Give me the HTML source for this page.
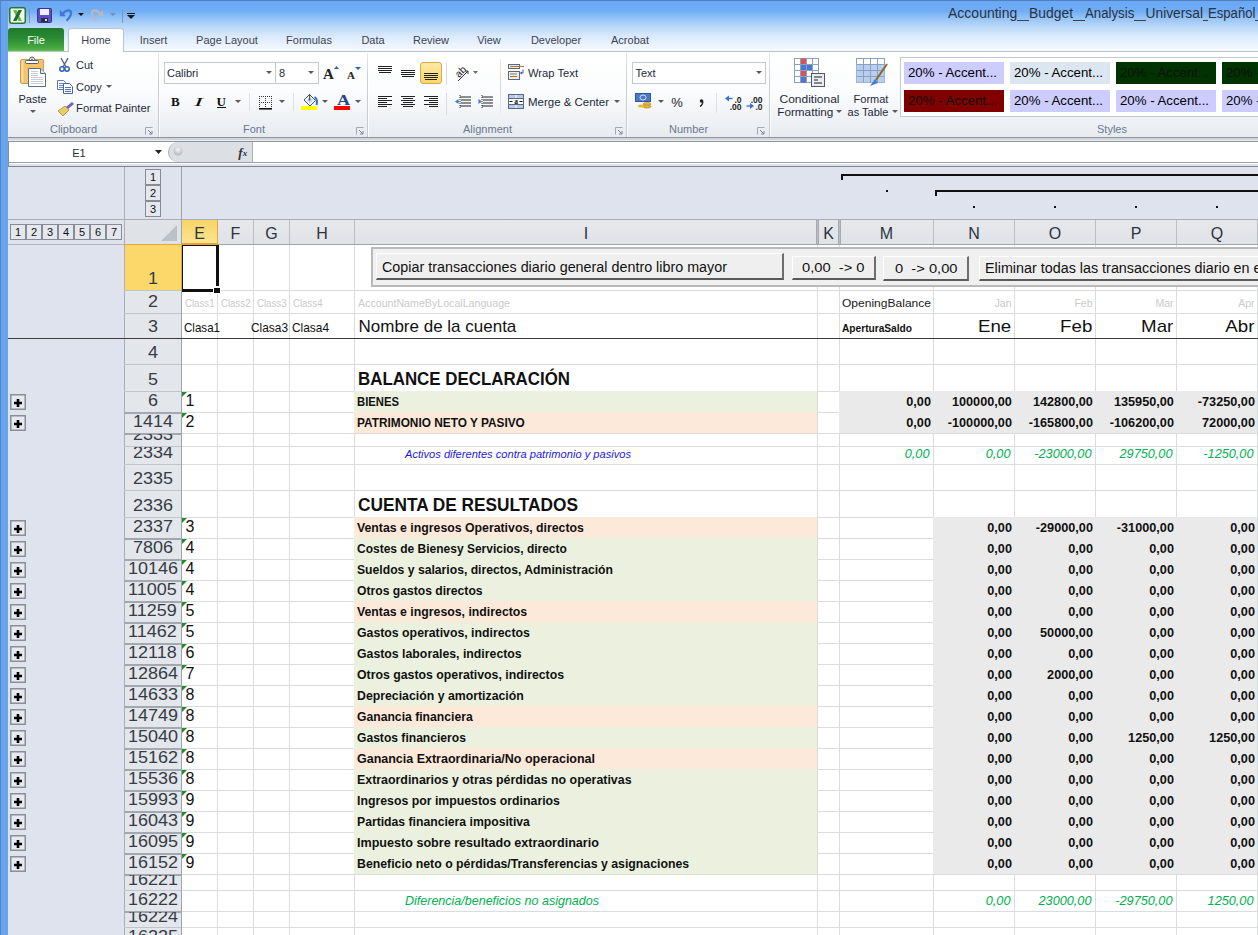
<!DOCTYPE html><html><head><meta charset="utf-8"><style>
html,body{margin:0;padding:0;}
body{width:1258px;height:935px;overflow:hidden;position:relative;background:#fff;font-family:"Liberation Sans",sans-serif;}
.r{position:absolute;}
.t{position:absolute;white-space:pre;}
</style></head><body>
<div class="r" style="left:0px;top:0px;width:1258px;height:51px;background:linear-gradient(to bottom, #4f80c0 0px, #6aa8f4 1px, #70adf5 11px, #98c5f7 19px, #c0dbf9 28px, #dfecfc 38px, #f4f8fe 50px);"></div>
<div class="r" style="left:0px;top:0px;width:8px;height:935px;background:#6aa5ee;"></div>
<div class="r" style="left:0px;top:0px;width:1px;height:935px;background:#4f86cf;"></div>
<div class="r" style="left:0px;top:0px;width:1258px;height:1px;background:#4f80c0;"></div>
<svg class="r" style="left:9px;top:7px" width="17" height="17" viewBox="0 0 17 17"><rect x="0.75" y="0.75" width="15.5" height="15.5" rx="2" fill="#f4fbf2" stroke="#1f7a2e" stroke-width="1.5"/><path d="M4 3 L7.5 3 L13 14 L9.5 14 Z" fill="#5cbf4a"/><path d="M13 3 L9.5 3 L4 14 L7.5 14 Z" fill="#1e6e2a"/></svg>
<div class="r" style="left:29px;top:9px;width:1px;height:14px;background:#7d97b8;"></div>
<svg class="r" style="left:37px;top:8px" width="15" height="15" viewBox="0 0 15 15"><rect x="0.5" y="0.5" width="14" height="14" rx="1" fill="#5a4fc2" stroke="#3b3390"/><rect x="3" y="1" width="9" height="6" fill="#eef0ff"/><rect x="4" y="10" width="7" height="4" fill="#2a2a55"/><rect x="8" y="11" width="2" height="2" fill="#ddd"/></svg>
<svg class="r" style="left:59px;top:8px" width="14" height="14" viewBox="0 0 14 14"><path d="M3.5 6 Q8 0.8 11.5 3.2 Q13.5 7 7.5 12.8" fill="none" stroke="#3f78d8" stroke-width="2.2"/><path d="M0.8 1.8 L0.8 8.2 L7 8.2 Z" fill="#3f78d8"/></svg>
<svg class="r" style="left:78px;top:13px" width="6" height="4" viewBox="0 0 6 4"><path d="M0 0 L6 0 L3 3 Z" fill="#111"/></svg>
<svg class="r" style="left:90px;top:8px" width="14" height="14" viewBox="0 0 14 14"><path d="M10.5 6 Q6 0.8 2.5 3.2 Q0.5 7 6.5 12.8" fill="none" stroke="#b9b9bc" stroke-width="2.2"/><path d="M13.2 1.8 L13.2 8.2 L7 8.2 Z" fill="#b9b9bc"/></svg>
<svg class="r" style="left:110px;top:13px" width="6" height="4" viewBox="0 0 6 4"><path d="M0 0 L6 0 L3 3 Z" fill="#6f8fb8"/></svg>
<div class="r" style="left:122px;top:9px;width:1px;height:14px;background:#7d97b8;"></div>
<svg class="r" style="left:127px;top:13px" width="8" height="7" viewBox="0 0 8 7"><rect x="0" y="0" width="8" height="1" fill="#1a1a1a"/><path d="M0 2 L8 2 L4 6 Z" fill="#1a1a1a"/></svg>
<div class="t" style="left:947.50px;top:7.15px;font-size:13.8px;line-height:13.8px;color:#2a3240;font-family:'Liberation Sans', sans-serif;transform:scaleX(1.0149);transform-origin:0 0;">Accounting</div>
<div class="t" style="left:1029.20px;top:7.15px;font-size:13.8px;line-height:13.8px;color:#2a3240;font-family:'Liberation Sans', sans-serif;transform:scaleX(1.0060);transform-origin:0 0;">Budget</div>
<div class="t" style="left:1084.50px;top:7.15px;font-size:13.8px;line-height:13.8px;color:#2a3240;font-family:'Liberation Sans', sans-serif;transform:scaleX(0.9594);transform-origin:0 0;">Analysis</div>
<div class="t" style="left:1145.50px;top:7.15px;font-size:13.8px;line-height:13.8px;color:#2a3240;font-family:'Liberation Sans', sans-serif;">Universal</div>
<div class="t" style="left:1207.70px;top:7.15px;font-size:13.8px;line-height:13.8px;color:#2a3240;font-family:'Liberation Sans', sans-serif;transform:scaleX(0.9504);transform-origin:0 0;">Español</div>
<div class="r" style="left:1016.5px;top:20px;width:12.5px;height:1px;background:#3a4250;"></div>
<div class="r" style="left:1073px;top:20px;width:11.5px;height:1px;background:#3a4250;"></div>
<div class="r" style="left:1133.5px;top:20px;width:12.0px;height:1px;background:#3a4250;"></div>
<div class="r" style="left:1202.5px;top:20px;width:5.5px;height:1px;background:#3a4250;"></div>
<div class="r" style="left:1255px;top:20px;width:3px;height:1px;background:#3a4250;"></div>
<div class="r" style="left:8px;top:28px;width:56px;height:23px;background:linear-gradient(to bottom, #1f7a2a 0px, #2a8a33 10px, #46a93f 20px, #5cc14a 23px);border-radius:3px 3px 0 0;"></div>
<div class="t" style="left:27.14px;top:34.87px;font-size:11px;line-height:11px;color:#ffffff;font-family:'Liberation Sans', sans-serif;">File</div>
<div class="r" style="left:68px;top:28px;width:56px;height:24px;background:#ffffff;border:1px solid #b6c4d6;border-bottom:none;border-radius:3px 3px 0 0;box-sizing:border-box;"></div>
<div class="t" style="left:81.33px;top:34.87px;font-size:11px;line-height:11px;color:#3c4452;font-family:'Liberation Sans', sans-serif;">Home</div>
<div class="t" style="left:139.74px;top:34.87px;font-size:11px;line-height:11px;color:#3c4452;font-family:'Liberation Sans', sans-serif;">Insert</div>
<div class="t" style="left:196.11px;top:34.87px;font-size:11px;line-height:11px;color:#3c4452;font-family:'Liberation Sans', sans-serif;">Page Layout</div>
<div class="t" style="left:286.08px;top:34.87px;font-size:11px;line-height:11px;color:#3c4452;font-family:'Liberation Sans', sans-serif;">Formulas</div>
<div class="t" style="left:361.38px;top:34.87px;font-size:11px;line-height:11px;color:#3c4452;font-family:'Liberation Sans', sans-serif;">Data</div>
<div class="t" style="left:412.97px;top:34.87px;font-size:11px;line-height:11px;color:#3c4452;font-family:'Liberation Sans', sans-serif;">Review</div>
<div class="t" style="left:477.18px;top:34.87px;font-size:11px;line-height:11px;color:#3c4452;font-family:'Liberation Sans', sans-serif;">View</div>
<div class="t" style="left:530.93px;top:34.87px;font-size:11px;line-height:11px;color:#3c4452;font-family:'Liberation Sans', sans-serif;">Developer</div>
<div class="t" style="left:611.04px;top:34.87px;font-size:11px;line-height:11px;color:#3c4452;font-family:'Liberation Sans', sans-serif;">Acrobat</div>
<div class="r" style="left:8px;top:51px;width:1250px;height:1px;background:#b9c3ce;"></div>
<div class="r" style="left:8px;top:52px;width:1250px;height:85px;background:linear-gradient(to bottom, #ffffff 0px, #fbfcfd 40px, #eef1f5 68px, #e7ebf0 85px);"></div>
<div class="r" style="left:69px;top:51px;width:54px;height:1px;background:#ffffff;"></div>
<div class="r" style="left:8px;top:137px;width:1250px;height:1px;background:#8d949b;"></div>
<div class="r" style="left:8px;top:138px;width:1250px;height:3px;background:#d0d5da;"></div>
<div class="r" style="left:158px;top:53px;width:1px;height:84px;background:linear-gradient(to bottom, #e4e8ec 0%, #c9cfd7 30%, #c3c9d1 100%);"></div>
<div class="r" style="left:159px;top:53px;width:1px;height:84px;background:rgba(255,255,255,0.9);"></div>
<div class="r" style="left:367px;top:53px;width:1px;height:84px;background:linear-gradient(to bottom, #e4e8ec 0%, #c9cfd7 30%, #c3c9d1 100%);"></div>
<div class="r" style="left:368px;top:53px;width:1px;height:84px;background:rgba(255,255,255,0.9);"></div>
<div class="r" style="left:626px;top:53px;width:1px;height:84px;background:linear-gradient(to bottom, #e4e8ec 0%, #c9cfd7 30%, #c3c9d1 100%);"></div>
<div class="r" style="left:627px;top:53px;width:1px;height:84px;background:rgba(255,255,255,0.9);"></div>
<div class="r" style="left:769px;top:53px;width:1px;height:84px;background:linear-gradient(to bottom, #e4e8ec 0%, #c9cfd7 30%, #c3c9d1 100%);"></div>
<div class="r" style="left:770px;top:53px;width:1px;height:84px;background:rgba(255,255,255,0.9);"></div>
<div class="t" style="left:49.96px;top:123.87px;font-size:11px;line-height:11px;color:#6a7890;font-family:'Liberation Sans', sans-serif;">Clipboard</div>
<div class="t" style="left:242.99px;top:123.87px;font-size:11px;line-height:11px;color:#6a7890;font-family:'Liberation Sans', sans-serif;">Font</div>
<div class="t" style="left:463.04px;top:123.87px;font-size:11px;line-height:11px;color:#6a7890;font-family:'Liberation Sans', sans-serif;">Alignment</div>
<div class="t" style="left:668.94px;top:123.87px;font-size:11px;line-height:11px;color:#6a7890;font-family:'Liberation Sans', sans-serif;">Number</div>
<div class="t" style="left:1097.02px;top:123.87px;font-size:11px;line-height:11px;color:#6a7890;font-family:'Liberation Sans', sans-serif;">Styles</div>
<svg class="r" style="left:145px;top:127px" width="8" height="8" viewBox="0 0 8 8"><path d="M0.5 7.5 L0.5 0.5 L7.5 0.5" fill="none" stroke="#a0a8b4"/><path d="M3 3 L7 7 M7 4 L7 7 L4 7" fill="none" stroke="#7a8494"/></svg>
<svg class="r" style="left:356px;top:127px" width="8" height="8" viewBox="0 0 8 8"><path d="M0.5 7.5 L0.5 0.5 L7.5 0.5" fill="none" stroke="#a0a8b4"/><path d="M3 3 L7 7 M7 4 L7 7 L4 7" fill="none" stroke="#7a8494"/></svg>
<svg class="r" style="left:615px;top:127px" width="8" height="8" viewBox="0 0 8 8"><path d="M0.5 7.5 L0.5 0.5 L7.5 0.5" fill="none" stroke="#a0a8b4"/><path d="M3 3 L7 7 M7 4 L7 7 L4 7" fill="none" stroke="#7a8494"/></svg>
<svg class="r" style="left:757px;top:127px" width="8" height="8" viewBox="0 0 8 8"><path d="M0.5 7.5 L0.5 0.5 L7.5 0.5" fill="none" stroke="#a0a8b4"/><path d="M3 3 L7 7 M7 4 L7 7 L4 7" fill="none" stroke="#7a8494"/></svg>
<svg class="r" style="left:19px;top:56px" width="28" height="32" viewBox="0 0 28 32"><rect x="1.5" y="3.5" width="23" height="24" rx="1.5" fill="#f3c46c" stroke="#c59c58"/><rect x="2.5" y="4.5" width="2" height="22" fill="#f9dc9a"/><circle cx="13" cy="3.5" r="2.5" fill="#fff" stroke="#4c5a6a"/><rect x="6.5" y="4.5" width="13" height="3" rx="1" fill="#fff" stroke="#4c5a6a"/><circle cx="13" cy="3.3" r="0.9" fill="#7a5020"/><path d="M9.5 12.5 H21.5 L26.5 17.5 V30.5 H9.5 Z" fill="#fff" stroke="#5a6d85"/><path d="M21.5 12.5 V17.5 H26.5" fill="#dde5f0" stroke="#5a6d85"/><path d="M12 15.5h7M12 17.5h7M12 19.5h7M12 21.5h12M12 23.5h12M12 25.5h12M12 27.5h12" stroke="#c5ccd6"/></svg>
<div class="t" style="left:18.44px;top:93.87px;font-size:11px;line-height:11px;color:#1e2a3a;font-family:'Liberation Sans', sans-serif;">Paste</div>
<svg class="r" style="left:30px;top:110px" width="6" height="4" viewBox="0 0 6 4"><path d="M0 0 L6 0 L3 3 Z" fill="#5a5a5a"/></svg>
<svg class="r" style="left:59px;top:57px" width="11" height="15" viewBox="0 0 11 15"><path d="M2 1 L7 10 M9 1 L4 10" stroke="#5c6472" stroke-width="1.4"/><circle cx="3" cy="12" r="2.2" fill="none" stroke="#2f5fc0" stroke-width="1.5"/><circle cx="8" cy="12" r="2.2" fill="none" stroke="#2f5fc0" stroke-width="1.5"/></svg>
<div class="t" style="left:76.00px;top:59.87px;font-size:11px;line-height:11px;color:#1e2a3a;font-family:'Liberation Sans', sans-serif;">Cut</div>
<svg class="r" style="left:57px;top:79px" width="16" height="15" viewBox="0 0 16 15"><path d="M0.5 1.5h6l2 2v7h-8z" fill="#fff" stroke="#5a7ab8"/><path d="M2 4.5h5M2 6.5h5M2 8.5h5" stroke="#6d8cc8"/><path d="M6.5 4.5h6l3 3v7h-9z" fill="#fff" stroke="#3f63a8"/><path d="M8 8.5h6M8 10.5h6M8 12.5h6" stroke="#4a70c0"/></svg>
<div class="t" style="left:76.00px;top:81.87px;font-size:11px;line-height:11px;color:#1e2a3a;font-family:'Liberation Sans', sans-serif;">Copy</div>
<svg class="r" style="left:106px;top:85px" width="6" height="4" viewBox="0 0 6 4"><path d="M0 0 L6 0 L3 3 Z" fill="#5a5a5a"/></svg>
<svg class="r" style="left:57px;top:101px" width="17" height="16" viewBox="0 0 17 16"><path d="M9 6 L15 1 L17 3 L11 8 Z" fill="#6b5fc8"/><path d="M1 10 L8 5 L12 9 L6 15 Z" fill="#e8cc6a" stroke="#a88a2a" stroke-width="0.8"/></svg>
<div class="t" style="left:76.00px;top:103.37px;font-size:11px;line-height:11px;color:#1e2a3a;font-family:'Liberation Sans', sans-serif;transform:scaleX(1.0241);transform-origin:0 0;">Format Painter</div>
<div class="r" style="left:164px;top:62px;width:112px;height:22px;background:#ffffff;border:1px solid #c3cad3;box-sizing:border-box;"></div>
<div class="r" style="left:275px;top:62px;width:44px;height:22px;background:#ffffff;border:1px solid #c3cad3;box-sizing:border-box;"></div>
<div class="t" style="left:167.00px;top:67.87px;font-size:11px;line-height:11px;color:#1e2a3a;font-family:'Liberation Sans', sans-serif;">Calibri</div>
<div class="t" style="left:279.00px;top:67.87px;font-size:11px;line-height:11px;color:#1e2a3a;font-family:'Liberation Sans', sans-serif;">8</div>
<svg class="r" style="left:266px;top:71px" width="6" height="4" viewBox="0 0 6 4"><path d="M0 0 L6 0 L3 3 Z" fill="#5a5a5a"/></svg>
<svg class="r" style="left:308px;top:71px" width="6" height="4" viewBox="0 0 6 4"><path d="M0 0 L6 0 L3 3 Z" fill="#5a5a5a"/></svg>
<div class="t" style="left:323.00px;top:66.55px;font-size:15px;line-height:15px;color:#222;font-family:'Liberation Serif', serif;font-weight:bold;">A</div>
<svg class="r" style="left:334px;top:66px" width="5" height="3" viewBox="0 0 5 3"><path d="M0 3 L5 3 L2.5 0 Z" fill="#2f5fc0"/></svg>
<div class="t" style="left:347.00px;top:69.87px;font-size:11px;line-height:11px;color:#222;font-family:'Liberation Serif', serif;font-weight:bold;">A</div>
<svg class="r" style="left:355px;top:67px" width="6" height="3" viewBox="0 0 6 3"><path d="M0 0 L6 0 L3 3 Z" fill="#2f5fc0"/></svg>
<div class="t" style="left:171.00px;top:94.71px;font-size:13px;line-height:13px;color:#111;font-family:'Liberation Serif', serif;font-weight:bold;">B</div>
<div class="t" style="left:193.50px;top:94.71px;font-size:13px;line-height:13px;color:#111;font-family:'Liberation Serif', serif;font-style:italic;transform:scaleX(2.0787);transform-origin:0 0;">I</div>
<div class="t" style="left:216.50px;top:94.71px;font-size:13px;line-height:13px;color:#111;font-family:'Liberation Serif', serif;font-weight:bold;">U</div>
<div class="r" style="left:217px;top:107px;width:9px;height:1px;background:#111;"></div>
<svg class="r" style="left:235px;top:100px" width="6" height="4" viewBox="0 0 6 4"><path d="M0 0 L6 0 L3 3 Z" fill="#5a5a5a"/></svg>
<div class="r" style="left:249px;top:93px;width:1px;height:18px;background:#dde1e6;"></div>
<svg class="r" style="left:259px;top:96px" width="14" height="14" viewBox="0 0 14 14"><rect x="0" y="0" width="1" height="1" fill="#333"/><rect x="6" y="0" width="1" height="1" fill="#333"/><rect x="12" y="0" width="1" height="1" fill="#333"/><rect x="0" y="2" width="1" height="1" fill="#333"/><rect x="6" y="2" width="1" height="1" fill="#333"/><rect x="12" y="2" width="1" height="1" fill="#333"/><rect x="0" y="4" width="1" height="1" fill="#333"/><rect x="6" y="4" width="1" height="1" fill="#333"/><rect x="12" y="4" width="1" height="1" fill="#333"/><rect x="0" y="6" width="1" height="1" fill="#333"/><rect x="6" y="6" width="1" height="1" fill="#333"/><rect x="12" y="6" width="1" height="1" fill="#333"/><rect x="0" y="8" width="1" height="1" fill="#333"/><rect x="6" y="8" width="1" height="1" fill="#333"/><rect x="12" y="8" width="1" height="1" fill="#333"/><rect x="0" y="10" width="1" height="1" fill="#333"/><rect x="6" y="10" width="1" height="1" fill="#333"/><rect x="12" y="10" width="1" height="1" fill="#333"/><rect x="2" y="0" width="1" height="1" fill="#333"/><rect x="4" y="0" width="1" height="1" fill="#333"/><rect x="8" y="0" width="1" height="1" fill="#333"/><rect x="10" y="0" width="1" height="1" fill="#333"/><rect x="2" y="6" width="1" height="1" fill="#333"/><rect x="4" y="6" width="1" height="1" fill="#333"/><rect x="8" y="6" width="1" height="1" fill="#333"/><rect x="10" y="6" width="1" height="1" fill="#333"/><rect x="0" y="12" width="13" height="1.6" fill="#111"/></svg>
<svg class="r" style="left:279px;top:100px" width="6" height="4" viewBox="0 0 6 4"><path d="M0 0 L6 0 L3 3 Z" fill="#5a5a5a"/></svg>
<div class="r" style="left:293px;top:93px;width:1px;height:18px;background:#dde1e6;"></div>
<svg class="r" style="left:300px;top:93px" width="19" height="18" viewBox="0 0 19 18"><path d="M4 7 L9.5 1.5 L15.5 7.5 L10 13 Z" fill="#fff" stroke="#2d4f8c" stroke-width="1"/><path d="M6.5 7.5 L10 4 L13.5 7.5 L10 11 Z" fill="#c9d8f0"/><path d="M9.5 1 L9.5 6" stroke="#555" stroke-width="1.2"/><circle cx="9.5" cy="6.5" r="1" fill="#555"/><path d="M14.5 4 Q18 6 16.5 12" stroke="#2f6fd0" stroke-width="2" fill="none"/><rect x="1" y="13" width="16" height="4" fill="#ffff00"/></svg>
<svg class="r" style="left:322px;top:100px" width="6" height="4" viewBox="0 0 6 4"><path d="M0 0 L6 0 L3 3 Z" fill="#5a5a5a"/></svg>
<div class="t" style="left:336.50px;top:92.55px;font-size:15px;line-height:15px;color:#23438c;font-family:'Liberation Serif', serif;font-weight:bold;transform:scaleX(1.2001);transform-origin:0 0;">A</div>
<div class="r" style="left:334px;top:106px;width:16px;height:4px;background:#ff0000;"></div>
<svg class="r" style="left:355px;top:100px" width="6" height="4" viewBox="0 0 6 4"><path d="M0 0 L6 0 L3 3 Z" fill="#5a5a5a"/></svg>
<svg class="r" style="left:378px;top:66px" width="16" height="8" viewBox="0 0 16 8"><rect x="0" y="0" width="14" height="1" fill="#222"/><rect x="0" y="2" width="14" height="1" fill="#222"/><rect x="0" y="4" width="14" height="1" fill="#222"/><rect x="1" y="6" width="12" height="1" fill="#222"/></svg>
<svg class="r" style="left:401px;top:70px" width="16" height="8" viewBox="0 0 16 8"><rect x="0" y="0" width="14" height="1" fill="#222"/><rect x="0" y="2" width="14" height="1" fill="#222"/><rect x="0" y="4" width="14" height="1" fill="#222"/><rect x="1" y="6" width="12" height="1" fill="#222"/></svg>
<div class="r" style="left:420px;top:62px;width:22px;height:22px;background:linear-gradient(to bottom,#fde9a4,#fbd66f);border:1px solid #dca84a;border-radius:3px;box-sizing:border-box;"></div>
<svg class="r" style="left:424px;top:73px" width="16" height="8" viewBox="0 0 16 8"><rect x="0" y="0" width="14" height="1" fill="#222"/><rect x="0" y="2" width="14" height="1" fill="#222"/><rect x="0" y="4" width="14" height="1" fill="#222"/><rect x="1" y="6" width="12" height="1" fill="#222"/></svg>
<div class="r" style="left:446px;top:63px;width:1px;height:22px;background:#d5dae0;"></div>
<svg class="r" style="left:455px;top:65px" width="24" height="17" viewBox="0 0 24 17"><text x="0" y="0" font-size="10" font-family="Liberation Sans" fill="#222" transform="translate(4,13) rotate(-45)">ab</text><path d="M3 16 L13 6" stroke="#333"/><path d="M10 6 L13 6 L13 9" fill="none" stroke="#333"/><path d="M18 6 L23 6 L20.5 9 Z" fill="#6a6a6a"/></svg>
<svg class="r" style="left:378px;top:96px" width="16" height="12" viewBox="0 0 16 12"><rect x="0" y="0" width="14" height="1" fill="#222"/><rect x="0" y="2" width="9" height="1" fill="#222"/><rect x="0" y="4" width="14" height="1" fill="#222"/><rect x="0" y="6" width="9" height="1" fill="#222"/><rect x="0" y="8" width="14" height="1" fill="#222"/><rect x="0" y="10" width="9" height="1" fill="#222"/></svg>
<svg class="r" style="left:401px;top:96px" width="16" height="12" viewBox="0 0 16 12"><rect x="0" y="0" width="14" height="1" fill="#222"/><rect x="2" y="2" width="10" height="1" fill="#222"/><rect x="0" y="4" width="14" height="1" fill="#222"/><rect x="2" y="6" width="10" height="1" fill="#222"/><rect x="0" y="8" width="14" height="1" fill="#222"/><rect x="2" y="10" width="10" height="1" fill="#222"/></svg>
<svg class="r" style="left:424px;top:96px" width="16" height="12" viewBox="0 0 16 12"><rect x="0" y="0" width="14" height="1" fill="#222"/><rect x="5" y="2" width="9" height="1" fill="#222"/><rect x="0" y="4" width="14" height="1" fill="#222"/><rect x="5" y="6" width="9" height="1" fill="#222"/><rect x="0" y="8" width="14" height="1" fill="#222"/><rect x="5" y="10" width="9" height="1" fill="#222"/></svg>
<div class="r" style="left:446px;top:93px;width:1px;height:22px;background:#d5dae0;"></div>
<svg class="r" style="left:455px;top:94px" width="17" height="15" viewBox="0 0 17 15"><path d="M5 3h11M6 6h10M6 9h10M5 12h11" stroke="#222" stroke-width="1.2"/><path d="M5 1v14" stroke="#222" stroke-dasharray="1 1"/><path d="M0 7.5 L3.5 5 L3.5 10 Z" fill="#3a7ae0"/><path d="M3 7.5h2" stroke="#3a7ae0"/></svg>
<svg class="r" style="left:477px;top:94px" width="17" height="15" viewBox="0 0 17 15"><path d="M5 3h11M6 6h10M6 9h10M5 12h11" stroke="#222" stroke-width="1.2"/><path d="M5 1v14" stroke="#222" stroke-dasharray="1 1"/><path d="M5 7.5 L1.5 5 L1.5 10 Z" fill="#3a7ae0"/></svg>
<div class="r" style="left:500px;top:59px;width:1px;height:55px;background:linear-gradient(to bottom,#e8ecf1,#cfd5dd 50%,#e8ecf1);"></div>
<svg class="r" style="left:508px;top:64px" width="17" height="17" viewBox="0 0 17 17"><rect x="0.5" y="0.5" width="11" height="4" fill="#e8eef6" stroke="#56697f"/><path d="M2 2.5h14" stroke="#b8732a" stroke-width="1.1"/><rect x="0.5" y="7.5" width="11" height="8" fill="#e8eef6" stroke="#56697f"/><path d="M2 10h7M2 12.5h7" stroke="#b8732a" stroke-width="1.1"/><path d="M15 5.5 V9 L12.5 9" fill="none" stroke="#3a62b0"/><path d="M12 9 L14 7.5 L14 10.5 Z" fill="#3a62b0"/></svg>
<div class="t" style="left:527.50px;top:68.37px;font-size:11px;line-height:11px;color:#1e2a3a;font-family:'Liberation Sans', sans-serif;transform:scaleX(1.0180);transform-origin:0 0;">Wrap Text</div>
<svg class="r" style="left:508px;top:94px" width="16" height="15" viewBox="0 0 16 15"><rect x="0.5" y="0.5" width="15" height="14" fill="#fff" stroke="#56697f"/><rect x="1" y="1" width="14" height="3" fill="#b7cbe8"/><rect x="1" y="11" width="14" height="3" fill="#b7cbe8"/><path d="M8 1v3M8 11v3" stroke="#fff"/><path d="M0.5 4.5h15M0.5 10.5h15" stroke="#56697f"/><text x="8" y="10" font-size="7.5" font-weight="bold" text-anchor="middle" font-family="Liberation Serif" fill="#111">a</text><path d="M1.5 7.5h3M11.5 7.5h3" stroke="#111"/></svg>
<div class="t" style="left:527.50px;top:97.37px;font-size:11px;line-height:11px;color:#1e2a3a;font-family:'Liberation Sans', sans-serif;transform:scaleX(1.0432);transform-origin:0 0;">Merge &amp; Center</div>
<svg class="r" style="left:614px;top:100px" width="6" height="4" viewBox="0 0 6 4"><path d="M0 0 L6 0 L3 3 Z" fill="#5a5a5a"/></svg>
<div class="r" style="left:632px;top:62px;width:134px;height:22px;background:#ffffff;border:1px solid #c3cad3;box-sizing:border-box;"></div>
<div class="t" style="left:635.50px;top:67.87px;font-size:11px;line-height:11px;color:#1e2a3a;font-family:'Liberation Sans', sans-serif;">Text</div>
<svg class="r" style="left:756px;top:71px" width="6" height="4" viewBox="0 0 6 4"><path d="M0 0 L6 0 L3 3 Z" fill="#5a5a5a"/></svg>
<svg class="r" style="left:635px;top:93px" width="18" height="16" viewBox="0 0 18 16"><rect x="0.5" y="0.5" width="15" height="8" fill="#4a78c8" stroke="#2f5aa0"/><ellipse cx="8" cy="4.5" rx="3" ry="2.5" fill="none" stroke="#dde"/><ellipse cx="12" cy="11" rx="4" ry="1.6" fill="#e6b53a" stroke="#a8801e" stroke-width="0.6"/><ellipse cx="12" cy="13.5" rx="4" ry="1.6" fill="#e6b53a" stroke="#a8801e" stroke-width="0.6"/><ellipse cx="6" cy="13" rx="3" ry="1.5" fill="#e6b53a"/></svg>
<svg class="r" style="left:658px;top:100px" width="6" height="4" viewBox="0 0 6 4"><path d="M0 0 L6 0 L3 3 Z" fill="#5a5a5a"/></svg>
<div class="t" style="left:671.22px;top:96.21px;font-size:13px;line-height:13px;color:#222;font-family:'Liberation Sans', sans-serif;">%</div>
<svg class="r" style="left:698px;top:98px" width="7" height="10" viewBox="0 0 7 10"><circle cx="3.5" cy="3" r="1.8" fill="#222"/><path d="M4.8 3.5 Q5 6.5 2 8.5" stroke="#222" stroke-width="1.3" fill="none"/></svg>
<div class="r" style="left:716px;top:93px;width:1px;height:20px;background:#dde1e6;"></div>
<svg class="r" style="left:724px;top:94px" width="40" height="17" viewBox="0 0 40 17"><g font-family="Liberation Sans" font-size="8.5" font-weight="bold" fill="#222"><text x="17.5" y="8.5" text-anchor="end">.0</text><text x="17.5" y="15.5" text-anchor="end">.00</text><text x="38.5" y="8.5" text-anchor="end">.00</text><text x="38.5" y="15.5" text-anchor="end">.0</text></g><path d="M1 4.5 L5 1.5 L5 7.5 Z" fill="#3a6fd8"/><path d="M4 4.5h4.5" stroke="#3a6fd8" stroke-width="1.4"/><path d="M30 12 L26 9 L26 15 Z" fill="#3a6fd8"/><path d="M22.5 12h4" stroke="#3a6fd8" stroke-width="1.4"/></svg>
<svg class="r" style="left:794px;top:58px" width="32" height="30" viewBox="0 0 32 30"><g stroke="#8aa0c0" fill="#fff"><rect x="0.5" y="0.5" width="24" height="24"/></g><rect x="6.5" y="0.5" width="6" height="24" fill="#e05050"/><rect x="6.5" y="6.5" width="12" height="6" fill="#4a78d0"/><rect x="6.5" y="18.5" width="6" height="6" fill="#4a78d0"/><path d="M0.5 6.5h24M0.5 12.5h24M0.5 18.5h24M6.5 0.5v24M12.5 0.5v24M18.5 0.5v24" stroke="#8aa0c0"/><rect x="17.5" y="15.5" width="13" height="13" fill="#e8ecf2" stroke="#556"/><path d="M20 19h8M20 22h4M20 25h8" stroke="#222"/></svg>
<div class="t" style="left:781.98px;top:93.87px;font-size:11px;line-height:11px;color:#1e2a3a;font-family:'Liberation Sans', sans-serif;transform:scaleX(1.0901);transform-origin:50% 0;">Conditional</div>
<div class="t" style="left:779.21px;top:106.87px;font-size:11px;line-height:11px;color:#1e2a3a;font-family:'Liberation Sans', sans-serif;transform:scaleX(1.0652);transform-origin:50% 0;">Formatting</div>
<svg class="r" style="left:836px;top:110px" width="6" height="4" viewBox="0 0 6 4"><path d="M0 0 L6 0 L3 3 Z" fill="#5a5a5a"/></svg>
<svg class="r" style="left:856px;top:58px" width="32" height="30" viewBox="0 0 32 30"><rect x="0.5" y="0.5" width="28" height="24" fill="#fff" stroke="#8aa0c0"/><rect x="0.5" y="6.5" width="28" height="18" fill="#b8cdf0"/><path d="M0.5 6.5h28M0.5 12.5h28M0.5 18.5h28M7.5 0.5v24M14.5 0.5v24M21.5 0.5v24" stroke="#8aa0c0"/><path d="M31 6 L20 22" stroke="#8a6a30" stroke-width="2"/><path d="M19 21 L14 28 L22 25 Z" fill="#4a7ad0"/></svg>
<div class="t" style="left:853.58px;top:93.87px;font-size:11px;line-height:11px;color:#1e2a3a;font-family:'Liberation Sans', sans-serif;">Format</div>
<div class="t" style="left:847.61px;top:106.87px;font-size:11px;line-height:11px;color:#1e2a3a;font-family:'Liberation Sans', sans-serif;">as Table</div>
<svg class="r" style="left:892px;top:110px" width="6" height="4" viewBox="0 0 6 4"><path d="M0 0 L6 0 L3 3 Z" fill="#5a5a5a"/></svg>
<div class="r" style="left:900px;top:57px;width:360px;height:60px;background:#ffffff;border:1px solid #c3cad3;box-sizing:border-box;"></div>
<div class="r" style="left:904px;top:62px;width:100px;height:22px;background:#ccccff;"></div>
<div class="t" style="left:908.00px;top:66.62px;font-size:12.5px;line-height:12.5px;color:#000;font-family:'Liberation Sans', sans-serif;transform:scaleX(1.0586);transform-origin:0 0;">20% - Accent...</div>
<div class="r" style="left:1010px;top:62px;width:100px;height:22px;background:#dce6f1;"></div>
<div class="t" style="left:1014.00px;top:66.62px;font-size:12.5px;line-height:12.5px;color:#000;font-family:'Liberation Sans', sans-serif;transform:scaleX(1.0586);transform-origin:0 0;">20% - Accent...</div>
<div class="r" style="left:1116px;top:62px;width:100px;height:22px;background:#003300;"></div>
<div class="t" style="left:1120.00px;top:66.62px;font-size:12.5px;line-height:12.5px;color:#111;font-family:'Liberation Sans', sans-serif;transform:scaleX(1.0586);transform-origin:0 0;">20% - Accent...</div>
<div class="r" style="left:1222px;top:62px;width:100px;height:22px;background:#003300;"></div>
<div class="t" style="left:1226.00px;top:66.62px;font-size:12.5px;line-height:12.5px;color:#111;font-family:'Liberation Sans', sans-serif;transform:scaleX(1.0586);transform-origin:0 0;">20% - Accent...</div>
<div class="r" style="left:904px;top:90px;width:100px;height:22px;background:#800000;"></div>
<div class="t" style="left:908.00px;top:94.62px;font-size:12.5px;line-height:12.5px;color:#111;font-family:'Liberation Sans', sans-serif;transform:scaleX(1.0586);transform-origin:0 0;">20% - Accent...</div>
<div class="r" style="left:1010px;top:90px;width:100px;height:22px;background:#ccccff;"></div>
<div class="t" style="left:1014.00px;top:94.62px;font-size:12.5px;line-height:12.5px;color:#000;font-family:'Liberation Sans', sans-serif;transform:scaleX(1.0586);transform-origin:0 0;">20% - Accent...</div>
<div class="r" style="left:1116px;top:90px;width:100px;height:22px;background:#ccccff;"></div>
<div class="t" style="left:1120.00px;top:94.62px;font-size:12.5px;line-height:12.5px;color:#000;font-family:'Liberation Sans', sans-serif;transform:scaleX(1.0586);transform-origin:0 0;">20% - Accent...</div>
<div class="r" style="left:1222px;top:90px;width:100px;height:22px;background:#ccccff;"></div>
<div class="t" style="left:1226.00px;top:94.62px;font-size:12.5px;line-height:12.5px;color:#000;font-family:'Liberation Sans', sans-serif;transform:scaleX(1.0586);transform-origin:0 0;">20% - Accent...</div>
<div class="r" style="left:8px;top:140px;width:1250px;height:26px;background:#e9ecf0;"></div>
<div class="r" style="left:8px;top:141px;width:1250px;height:1px;background:#90969c;"></div>
<div class="r" style="left:8px;top:142px;width:1250px;height:20px;background:#ffffff;"></div>
<div class="r" style="left:8px;top:162px;width:1250px;height:1px;background:#9aa0a6;"></div>
<div class="r" style="left:8px;top:163px;width:1250px;height:1px;background:#ffffff;"></div>
<div class="r" style="left:9px;top:164px;width:1249px;height:2px;background:#dfe3ee;"></div>
<div class="r" style="left:8px;top:141px;width:1px;height:25px;background:#8a9096;"></div>
<div class="t" style="left:72.27px;top:147.87px;font-size:11px;line-height:11px;color:#1e2a3a;font-family:'Liberation Sans', sans-serif;">E1</div>
<svg class="r" style="left:155px;top:150px" width="7" height="4" viewBox="0 0 7 4"><path d="M0 0 L7 0 L3.5 4 Z" fill="#222"/></svg>
<div class="r" style="left:168px;top:142px;width:85px;height:20px;background:#dcdfe4;border-radius:10px 0 0 10px;border-left:1px solid #a9aeb4;box-sizing:border-box;"></div>
<div class="r" style="left:252px;top:142px;width:1px;height:20px;background:#a9aeb4;"></div>
<svg class="r" style="left:173px;top:146px" width="10" height="10" viewBox="0 0 10 10"><defs><radialGradient id="gb" cx="0.5" cy="0.35" r="0.6"><stop offset="0" stop-color="#f4f5f7"/><stop offset="1" stop-color="#b7bbc1"/></radialGradient></defs><circle cx="5" cy="5" r="4.5" fill="url(#gb)"/></svg>
<div class="t" style="left:238.34px;top:145.71px;font-size:13px;line-height:13px;color:#333;font-family:'Liberation Serif', serif;font-weight:bold;font-style:italic;">f</div>
<div class="t" style="left:242.75px;top:149.03px;font-size:9px;line-height:9px;color:#333;font-family:'Liberation Serif', serif;font-weight:bold;font-style:italic;">x</div>
<div class="r" style="left:8px;top:166px;width:1250px;height:1px;background:#80858a;"></div>
<div class="r" style="left:8px;top:167px;width:1250px;height:53px;background:#dfe3ee;"></div>
<div class="r" style="left:8px;top:220px;width:116px;height:715px;background:#dfe3ee;"></div>
<div class="r" style="left:124px;top:167px;width:1px;height:768px;background:#a9aeb5;"></div>
<div class="r" style="left:181px;top:167px;width:1px;height:53px;background:#c4cad6;"></div>
<div class="r" style="left:8px;top:219px;width:1250px;height:1px;background:#a9aeb5;"></div>
<div class="r" style="left:8px;top:244px;width:116px;height:1px;background:#b0b5bc;"></div>
<div class="r" style="left:145px;top:169px;width:16px;height:16px;background:#e4e7ed;border:1px solid #878c94;box-sizing:border-box;"></div>
<div class="t" style="left:149.94px;top:172.37px;font-size:11px;line-height:11px;color:#111;font-family:'Liberation Sans', sans-serif;">1</div>
<div class="r" style="left:145px;top:185px;width:16px;height:16px;background:#e4e7ed;border:1px solid #878c94;box-sizing:border-box;"></div>
<div class="t" style="left:149.94px;top:188.37px;font-size:11px;line-height:11px;color:#111;font-family:'Liberation Sans', sans-serif;">2</div>
<div class="r" style="left:145px;top:201px;width:16px;height:16px;background:#e4e7ed;border:1px solid #878c94;box-sizing:border-box;"></div>
<div class="t" style="left:149.94px;top:204.37px;font-size:11px;line-height:11px;color:#111;font-family:'Liberation Sans', sans-serif;">3</div>
<div class="r" style="left:10px;top:224px;width:16px;height:16px;background:#e4e7ed;border:1px solid #878c94;box-sizing:border-box;"></div>
<div class="t" style="left:14.94px;top:227.37px;font-size:11px;line-height:11px;color:#111;font-family:'Liberation Sans', sans-serif;">1</div>
<div class="r" style="left:26px;top:224px;width:16px;height:16px;background:#e4e7ed;border:1px solid #878c94;box-sizing:border-box;"></div>
<div class="t" style="left:30.94px;top:227.37px;font-size:11px;line-height:11px;color:#111;font-family:'Liberation Sans', sans-serif;">2</div>
<div class="r" style="left:42px;top:224px;width:16px;height:16px;background:#e4e7ed;border:1px solid #878c94;box-sizing:border-box;"></div>
<div class="t" style="left:46.94px;top:227.37px;font-size:11px;line-height:11px;color:#111;font-family:'Liberation Sans', sans-serif;">3</div>
<div class="r" style="left:58px;top:224px;width:16px;height:16px;background:#e4e7ed;border:1px solid #878c94;box-sizing:border-box;"></div>
<div class="t" style="left:62.94px;top:227.37px;font-size:11px;line-height:11px;color:#111;font-family:'Liberation Sans', sans-serif;">4</div>
<div class="r" style="left:74px;top:224px;width:16px;height:16px;background:#e4e7ed;border:1px solid #878c94;box-sizing:border-box;"></div>
<div class="t" style="left:78.94px;top:227.37px;font-size:11px;line-height:11px;color:#111;font-family:'Liberation Sans', sans-serif;">5</div>
<div class="r" style="left:90px;top:224px;width:16px;height:16px;background:#e4e7ed;border:1px solid #878c94;box-sizing:border-box;"></div>
<div class="t" style="left:94.94px;top:227.37px;font-size:11px;line-height:11px;color:#111;font-family:'Liberation Sans', sans-serif;">6</div>
<div class="r" style="left:106px;top:224px;width:16px;height:16px;background:#e4e7ed;border:1px solid #878c94;box-sizing:border-box;"></div>
<div class="t" style="left:110.94px;top:227.37px;font-size:11px;line-height:11px;color:#111;font-family:'Liberation Sans', sans-serif;">7</div>
<div class="r" style="left:182px;top:245px;width:1076px;height:690px;background:#ffffff;"></div>
<div class="r" style="left:182px;top:220px;width:1076px;height:24px;background:linear-gradient(to bottom,#e6e8ec,#dfe2e6);"></div>
<div class="r" style="left:125px;top:220px;width:56px;height:24px;background:#dfe2e6;"></div>
<svg class="r" style="left:160px;top:224px" width="18" height="18" viewBox="0 0 18 18"><path d="M17 1 L17 17 L1 17 Z" fill="#bcc1c8"/></svg>
<div class="r" style="left:124px;top:244px;width:1134px;height:1px;background:#9ea4ac;"></div>
<div class="r" style="left:217px;top:220px;width:1px;height:24px;background:#b9bec6;"></div>
<div class="r" style="left:253px;top:220px;width:1px;height:24px;background:#b9bec6;"></div>
<div class="r" style="left:289px;top:220px;width:1px;height:24px;background:#b9bec6;"></div>
<div class="r" style="left:354px;top:220px;width:1px;height:24px;background:#b9bec6;"></div>
<div class="r" style="left:817px;top:220px;width:1px;height:24px;background:#b9bec6;"></div>
<div class="r" style="left:839px;top:220px;width:1px;height:24px;background:#b9bec6;"></div>
<div class="r" style="left:933px;top:220px;width:1px;height:24px;background:#b9bec6;"></div>
<div class="r" style="left:1014px;top:220px;width:1px;height:24px;background:#b9bec6;"></div>
<div class="r" style="left:1095px;top:220px;width:1px;height:24px;background:#b9bec6;"></div>
<div class="r" style="left:1176px;top:220px;width:1px;height:24px;background:#b9bec6;"></div>
<div class="r" style="left:1257px;top:220px;width:1px;height:24px;background:#b9bec6;"></div>
<div class="r" style="left:816px;top:220px;width:1px;height:24px;background:#a5aab2;"></div>
<div class="r" style="left:818px;top:220px;width:1px;height:24px;background:#a5aab2;"></div>
<div class="r" style="left:838px;top:220px;width:1px;height:24px;background:#a5aab2;"></div>
<div class="r" style="left:840px;top:220px;width:1px;height:24px;background:#a5aab2;"></div>
<div class="r" style="left:182px;top:220px;width:35px;height:24px;background:linear-gradient(to bottom,#f8d46a,#fde58f);"></div>
<div class="r" style="left:181px;top:220px;width:1px;height:25px;background:#e1a93a;"></div>
<div class="r" style="left:217px;top:220px;width:1px;height:25px;background:#e1a93a;"></div>
<div class="r" style="left:182px;top:243px;width:35px;height:2px;background:#e8a030;"></div>
<div class="t" style="left:194.16px;top:225.72px;font-size:16px;line-height:16px;color:#2c3440;font-family:'Liberation Sans', sans-serif;">E</div>
<div class="t" style="left:230.61px;top:225.72px;font-size:16px;line-height:16px;color:#2c3440;font-family:'Liberation Sans', sans-serif;">F</div>
<div class="t" style="left:265.28px;top:225.72px;font-size:16px;line-height:16px;color:#2c3440;font-family:'Liberation Sans', sans-serif;">G</div>
<div class="t" style="left:316.22px;top:225.72px;font-size:16px;line-height:16px;color:#2c3440;font-family:'Liberation Sans', sans-serif;">H</div>
<div class="t" style="left:583.78px;top:225.72px;font-size:16px;line-height:16px;color:#2c3440;font-family:'Liberation Sans', sans-serif;">I</div>
<div class="t" style="left:823.16px;top:225.72px;font-size:16px;line-height:16px;color:#2c3440;font-family:'Liberation Sans', sans-serif;">K</div>
<div class="t" style="left:879.84px;top:225.72px;font-size:16px;line-height:16px;color:#2c3440;font-family:'Liberation Sans', sans-serif;">M</div>
<div class="t" style="left:968.22px;top:225.72px;font-size:16px;line-height:16px;color:#2c3440;font-family:'Liberation Sans', sans-serif;">N</div>
<div class="t" style="left:1048.78px;top:225.72px;font-size:16px;line-height:16px;color:#2c3440;font-family:'Liberation Sans', sans-serif;">O</div>
<div class="t" style="left:1130.66px;top:225.72px;font-size:16px;line-height:16px;color:#2c3440;font-family:'Liberation Sans', sans-serif;">P</div>
<div class="t" style="left:1210.78px;top:225.72px;font-size:16px;line-height:16px;color:#2c3440;font-family:'Liberation Sans', sans-serif;">Q</div>
<div class="r" style="left:125px;top:245px;width:56px;height:46px;background:#e3e6ea;"></div>
<div class="r" style="left:125px;top:291px;width:56px;height:23px;background:#e3e6ea;"></div>
<div class="r" style="left:125px;top:314px;width:56px;height:25px;background:#e3e6ea;"></div>
<div class="r" style="left:125px;top:339px;width:56px;height:26px;background:#e3e6ea;"></div>
<div class="r" style="left:125px;top:365px;width:56px;height:27px;background:#e3e6ea;"></div>
<div class="r" style="left:125px;top:392px;width:56px;height:21px;background:#e3e6ea;"></div>
<div class="r" style="left:125px;top:413px;width:56px;height:21px;background:#e3e6ea;"></div>
<div class="r" style="left:125px;top:434px;width:56px;height:13px;background:#e3e6ea;"></div>
<div class="r" style="left:125px;top:447px;width:56px;height:18px;background:#e3e6ea;"></div>
<div class="r" style="left:125px;top:465px;width:56px;height:26px;background:#e3e6ea;"></div>
<div class="r" style="left:125px;top:491px;width:56px;height:27px;background:#e3e6ea;"></div>
<div class="r" style="left:125px;top:518px;width:56px;height:21px;background:#e3e6ea;"></div>
<div class="r" style="left:125px;top:539px;width:56px;height:21px;background:#e3e6ea;"></div>
<div class="r" style="left:125px;top:560px;width:56px;height:21px;background:#e3e6ea;"></div>
<div class="r" style="left:125px;top:581px;width:56px;height:21px;background:#e3e6ea;"></div>
<div class="r" style="left:125px;top:602px;width:56px;height:21px;background:#e3e6ea;"></div>
<div class="r" style="left:125px;top:623px;width:56px;height:21px;background:#e3e6ea;"></div>
<div class="r" style="left:125px;top:644px;width:56px;height:21px;background:#e3e6ea;"></div>
<div class="r" style="left:125px;top:665px;width:56px;height:21px;background:#e3e6ea;"></div>
<div class="r" style="left:125px;top:686px;width:56px;height:21px;background:#e3e6ea;"></div>
<div class="r" style="left:125px;top:707px;width:56px;height:21px;background:#e3e6ea;"></div>
<div class="r" style="left:125px;top:728px;width:56px;height:21px;background:#e3e6ea;"></div>
<div class="r" style="left:125px;top:749px;width:56px;height:21px;background:#e3e6ea;"></div>
<div class="r" style="left:125px;top:770px;width:56px;height:21px;background:#e3e6ea;"></div>
<div class="r" style="left:125px;top:791px;width:56px;height:21px;background:#e3e6ea;"></div>
<div class="r" style="left:125px;top:812px;width:56px;height:21px;background:#e3e6ea;"></div>
<div class="r" style="left:125px;top:833px;width:56px;height:21px;background:#e3e6ea;"></div>
<div class="r" style="left:125px;top:854px;width:56px;height:21px;background:#e3e6ea;"></div>
<div class="r" style="left:125px;top:875px;width:56px;height:16px;background:#e3e6ea;"></div>
<div class="r" style="left:125px;top:891px;width:56px;height:21px;background:#e3e6ea;"></div>
<div class="r" style="left:125px;top:912px;width:56px;height:16px;background:#e3e6ea;"></div>
<div class="r" style="left:125px;top:928px;width:56px;height:21px;background:#e3e6ea;"></div>
<div class="r" style="left:125px;top:245px;width:56px;height:45px;background:#fcd86b;"></div>
<div class="r" style="left:124px;top:244px;width:58px;height:1px;background:#e1a93a;"></div>
<div class="r" style="left:124px;top:290px;width:58px;height:1px;background:#e1a93a;"></div>
<div class="r" style="left:181px;top:167px;width:1px;height:768px;background:#9ea4ac;"></div>
<div class="r" style="left:124px;top:290px;width:57px;height:1px;background:#c1c5cc;"></div>
<div class="r" style="left:124px;top:313px;width:57px;height:1px;background:#c1c5cc;"></div>
<div class="r" style="left:124px;top:338px;width:57px;height:1px;background:#c1c5cc;"></div>
<div class="r" style="left:124px;top:364px;width:57px;height:1px;background:#c1c5cc;"></div>
<div class="r" style="left:124px;top:391px;width:57px;height:1px;background:#c1c5cc;"></div>
<div class="r" style="left:124px;top:412px;width:57px;height:2px;background:#a3a8b0;"></div>
<div class="r" style="left:124px;top:433px;width:57px;height:2px;background:#a3a8b0;"></div>
<div class="r" style="left:124px;top:446px;width:57px;height:1px;background:#c1c5cc;"></div>
<div class="r" style="left:124px;top:464px;width:57px;height:1px;background:#c1c5cc;"></div>
<div class="r" style="left:124px;top:490px;width:57px;height:1px;background:#c1c5cc;"></div>
<div class="r" style="left:124px;top:517px;width:57px;height:1px;background:#c1c5cc;"></div>
<div class="r" style="left:124px;top:538px;width:57px;height:2px;background:#a3a8b0;"></div>
<div class="r" style="left:124px;top:559px;width:57px;height:2px;background:#a3a8b0;"></div>
<div class="r" style="left:124px;top:580px;width:57px;height:2px;background:#a3a8b0;"></div>
<div class="r" style="left:124px;top:601px;width:57px;height:2px;background:#a3a8b0;"></div>
<div class="r" style="left:124px;top:622px;width:57px;height:2px;background:#a3a8b0;"></div>
<div class="r" style="left:124px;top:643px;width:57px;height:2px;background:#a3a8b0;"></div>
<div class="r" style="left:124px;top:664px;width:57px;height:2px;background:#a3a8b0;"></div>
<div class="r" style="left:124px;top:685px;width:57px;height:2px;background:#a3a8b0;"></div>
<div class="r" style="left:124px;top:706px;width:57px;height:2px;background:#a3a8b0;"></div>
<div class="r" style="left:124px;top:727px;width:57px;height:2px;background:#a3a8b0;"></div>
<div class="r" style="left:124px;top:748px;width:57px;height:2px;background:#a3a8b0;"></div>
<div class="r" style="left:124px;top:769px;width:57px;height:2px;background:#a3a8b0;"></div>
<div class="r" style="left:124px;top:790px;width:57px;height:2px;background:#a3a8b0;"></div>
<div class="r" style="left:124px;top:811px;width:57px;height:2px;background:#a3a8b0;"></div>
<div class="r" style="left:124px;top:832px;width:57px;height:2px;background:#a3a8b0;"></div>
<div class="r" style="left:124px;top:853px;width:57px;height:2px;background:#a3a8b0;"></div>
<div class="r" style="left:124px;top:874px;width:57px;height:2px;background:#a3a8b0;"></div>
<div class="r" style="left:124px;top:890px;width:57px;height:1px;background:#c1c5cc;"></div>
<div class="r" style="left:124px;top:911px;width:57px;height:2px;background:#a3a8b0;"></div>
<div class="r" style="left:124px;top:927px;width:57px;height:1px;background:#c1c5cc;"></div>
<div class="r" style="left:124px;top:948px;width:57px;height:1px;background:#c1c5cc;"></div>
<div class="r" style="left:124px;top:245px;width:57px;height:46px;overflow:hidden">
<div class="t" style="left:23.80px;top:24.80px;font-size:16.5px;line-height:16.5px;color:#363c46;transform:scaleX(1.09);transform-origin:0 0">1</div>
</div>
<div class="r" style="left:124px;top:291px;width:57px;height:23px;overflow:hidden">
<div class="t" style="left:23.80px;top:1.81px;font-size:16.5px;line-height:16.5px;color:#363c46;transform:scaleX(1.09);transform-origin:0 0">2</div>
</div>
<div class="r" style="left:124px;top:314px;width:57px;height:25px;overflow:hidden">
<div class="t" style="left:23.80px;top:3.81px;font-size:16.5px;line-height:16.5px;color:#363c46;transform:scaleX(1.09);transform-origin:0 0">3</div>
</div>
<div class="r" style="left:124px;top:339px;width:57px;height:26px;overflow:hidden">
<div class="t" style="left:23.80px;top:4.81px;font-size:16.5px;line-height:16.5px;color:#363c46;transform:scaleX(1.09);transform-origin:0 0">4</div>
</div>
<div class="r" style="left:124px;top:365px;width:57px;height:27px;overflow:hidden">
<div class="t" style="left:23.80px;top:5.81px;font-size:16.5px;line-height:16.5px;color:#363c46;transform:scaleX(1.09);transform-origin:0 0">5</div>
</div>
<div class="r" style="left:124px;top:392px;width:57px;height:20px;overflow:hidden">
<div class="t" style="left:23.80px;top:-0.19px;font-size:16.5px;line-height:16.5px;color:#363c46;transform:scaleX(1.09);transform-origin:0 0">6</div>
</div>
<div class="r" style="left:124px;top:413px;width:57px;height:20px;overflow:hidden">
<div class="t" style="left:8.79px;top:-0.19px;font-size:16.5px;line-height:16.5px;color:#363c46;transform:scaleX(1.09);transform-origin:0 0">1414</div>
</div>
<div class="r" style="left:124px;top:434px;width:57px;height:13px;overflow:hidden">
<div class="t" style="left:8.79px;top:-8.19px;font-size:16.5px;line-height:16.5px;color:#363c46;transform:scaleX(1.09);transform-origin:0 0">2333</div>
</div>
<div class="r" style="left:124px;top:447px;width:57px;height:18px;overflow:hidden">
<div class="t" style="left:8.79px;top:-3.19px;font-size:16.5px;line-height:16.5px;color:#363c46;transform:scaleX(1.09);transform-origin:0 0">2334</div>
</div>
<div class="r" style="left:124px;top:465px;width:57px;height:26px;overflow:hidden">
<div class="t" style="left:8.79px;top:4.81px;font-size:16.5px;line-height:16.5px;color:#363c46;transform:scaleX(1.09);transform-origin:0 0">2335</div>
</div>
<div class="r" style="left:124px;top:491px;width:57px;height:27px;overflow:hidden">
<div class="t" style="left:8.79px;top:5.81px;font-size:16.5px;line-height:16.5px;color:#363c46;transform:scaleX(1.09);transform-origin:0 0">2336</div>
</div>
<div class="r" style="left:124px;top:518px;width:57px;height:20px;overflow:hidden">
<div class="t" style="left:8.79px;top:-0.19px;font-size:16.5px;line-height:16.5px;color:#363c46;transform:scaleX(1.09);transform-origin:0 0">2337</div>
</div>
<div class="r" style="left:124px;top:539px;width:57px;height:20px;overflow:hidden">
<div class="t" style="left:8.79px;top:-0.19px;font-size:16.5px;line-height:16.5px;color:#363c46;transform:scaleX(1.09);transform-origin:0 0">7806</div>
</div>
<div class="r" style="left:124px;top:560px;width:57px;height:20px;overflow:hidden">
<div class="t" style="left:3.79px;top:-0.19px;font-size:16.5px;line-height:16.5px;color:#363c46;transform:scaleX(1.09);transform-origin:0 0">10146</div>
</div>
<div class="r" style="left:124px;top:581px;width:57px;height:20px;overflow:hidden">
<div class="t" style="left:4.46px;top:-0.19px;font-size:16.5px;line-height:16.5px;color:#363c46;transform:scaleX(1.09);transform-origin:0 0">11005</div>
</div>
<div class="r" style="left:124px;top:602px;width:57px;height:20px;overflow:hidden">
<div class="t" style="left:4.46px;top:-0.19px;font-size:16.5px;line-height:16.5px;color:#363c46;transform:scaleX(1.09);transform-origin:0 0">11259</div>
</div>
<div class="r" style="left:124px;top:623px;width:57px;height:20px;overflow:hidden">
<div class="t" style="left:4.46px;top:-0.19px;font-size:16.5px;line-height:16.5px;color:#363c46;transform:scaleX(1.09);transform-origin:0 0">11462</div>
</div>
<div class="r" style="left:124px;top:644px;width:57px;height:20px;overflow:hidden">
<div class="t" style="left:4.46px;top:-0.19px;font-size:16.5px;line-height:16.5px;color:#363c46;transform:scaleX(1.09);transform-origin:0 0">12118</div>
</div>
<div class="r" style="left:124px;top:665px;width:57px;height:20px;overflow:hidden">
<div class="t" style="left:3.79px;top:-0.19px;font-size:16.5px;line-height:16.5px;color:#363c46;transform:scaleX(1.09);transform-origin:0 0">12864</div>
</div>
<div class="r" style="left:124px;top:686px;width:57px;height:20px;overflow:hidden">
<div class="t" style="left:3.79px;top:-0.19px;font-size:16.5px;line-height:16.5px;color:#363c46;transform:scaleX(1.09);transform-origin:0 0">14633</div>
</div>
<div class="r" style="left:124px;top:707px;width:57px;height:20px;overflow:hidden">
<div class="t" style="left:3.79px;top:-0.19px;font-size:16.5px;line-height:16.5px;color:#363c46;transform:scaleX(1.09);transform-origin:0 0">14749</div>
</div>
<div class="r" style="left:124px;top:728px;width:57px;height:20px;overflow:hidden">
<div class="t" style="left:3.79px;top:-0.19px;font-size:16.5px;line-height:16.5px;color:#363c46;transform:scaleX(1.09);transform-origin:0 0">15040</div>
</div>
<div class="r" style="left:124px;top:749px;width:57px;height:20px;overflow:hidden">
<div class="t" style="left:3.79px;top:-0.19px;font-size:16.5px;line-height:16.5px;color:#363c46;transform:scaleX(1.09);transform-origin:0 0">15162</div>
</div>
<div class="r" style="left:124px;top:770px;width:57px;height:20px;overflow:hidden">
<div class="t" style="left:3.79px;top:-0.19px;font-size:16.5px;line-height:16.5px;color:#363c46;transform:scaleX(1.09);transform-origin:0 0">15536</div>
</div>
<div class="r" style="left:124px;top:791px;width:57px;height:20px;overflow:hidden">
<div class="t" style="left:3.79px;top:-0.19px;font-size:16.5px;line-height:16.5px;color:#363c46;transform:scaleX(1.09);transform-origin:0 0">15993</div>
</div>
<div class="r" style="left:124px;top:812px;width:57px;height:20px;overflow:hidden">
<div class="t" style="left:3.79px;top:-0.19px;font-size:16.5px;line-height:16.5px;color:#363c46;transform:scaleX(1.09);transform-origin:0 0">16043</div>
</div>
<div class="r" style="left:124px;top:833px;width:57px;height:20px;overflow:hidden">
<div class="t" style="left:3.79px;top:-0.19px;font-size:16.5px;line-height:16.5px;color:#363c46;transform:scaleX(1.09);transform-origin:0 0">16095</div>
</div>
<div class="r" style="left:124px;top:854px;width:57px;height:20px;overflow:hidden">
<div class="t" style="left:3.79px;top:-0.19px;font-size:16.5px;line-height:16.5px;color:#363c46;transform:scaleX(1.09);transform-origin:0 0">16152</div>
</div>
<div class="r" style="left:124px;top:875px;width:57px;height:16px;overflow:hidden">
<div class="t" style="left:3.79px;top:-3.69px;font-size:16.5px;line-height:16.5px;color:#363c46;transform:scaleX(1.09);transform-origin:0 0">16221</div>
</div>
<div class="r" style="left:124px;top:891px;width:57px;height:20px;overflow:hidden">
<div class="t" style="left:3.79px;top:-0.19px;font-size:16.5px;line-height:16.5px;color:#363c46;transform:scaleX(1.09);transform-origin:0 0">16222</div>
</div>
<div class="r" style="left:124px;top:912px;width:57px;height:16px;overflow:hidden">
<div class="t" style="left:3.79px;top:-3.69px;font-size:16.5px;line-height:16.5px;color:#363c46;transform:scaleX(1.09);transform-origin:0 0">16224</div>
</div>
<div class="r" style="left:124px;top:928px;width:57px;height:21px;overflow:hidden">
<div class="t" style="left:3.79px;top:-0.19px;font-size:16.5px;line-height:16.5px;color:#363c46;transform:scaleX(1.09);transform-origin:0 0">16225</div>
</div>
<div class="r" style="left:217px;top:245px;width:1px;height:690px;background:#dadcdd;"></div>
<div class="r" style="left:253px;top:245px;width:1px;height:690px;background:#dadcdd;"></div>
<div class="r" style="left:289px;top:245px;width:1px;height:690px;background:#dadcdd;"></div>
<div class="r" style="left:354px;top:245px;width:1px;height:690px;background:#dadcdd;"></div>
<div class="r" style="left:817px;top:245px;width:1px;height:690px;background:#dadcdd;"></div>
<div class="r" style="left:839px;top:245px;width:1px;height:690px;background:#dadcdd;"></div>
<div class="r" style="left:933px;top:245px;width:1px;height:690px;background:#dadcdd;"></div>
<div class="r" style="left:1014px;top:245px;width:1px;height:690px;background:#dadcdd;"></div>
<div class="r" style="left:1095px;top:245px;width:1px;height:690px;background:#dadcdd;"></div>
<div class="r" style="left:1176px;top:245px;width:1px;height:690px;background:#dadcdd;"></div>
<div class="r" style="left:1257px;top:245px;width:1px;height:690px;background:#dadcdd;"></div>
<div class="r" style="left:182px;top:290px;width:1076px;height:1px;background:#dadcdd;"></div>
<div class="r" style="left:182px;top:313px;width:1076px;height:1px;background:#dadcdd;"></div>
<div class="r" style="left:182px;top:338px;width:1076px;height:1px;background:#dadcdd;"></div>
<div class="r" style="left:182px;top:364px;width:1076px;height:1px;background:#dadcdd;"></div>
<div class="r" style="left:182px;top:391px;width:1076px;height:1px;background:#dadcdd;"></div>
<div class="r" style="left:182px;top:412px;width:1076px;height:1px;background:#dadcdd;"></div>
<div class="r" style="left:182px;top:433px;width:1076px;height:1px;background:#dadcdd;"></div>
<div class="r" style="left:182px;top:446px;width:1076px;height:1px;background:#dadcdd;"></div>
<div class="r" style="left:182px;top:464px;width:1076px;height:1px;background:#dadcdd;"></div>
<div class="r" style="left:182px;top:490px;width:1076px;height:1px;background:#dadcdd;"></div>
<div class="r" style="left:182px;top:517px;width:1076px;height:1px;background:#dadcdd;"></div>
<div class="r" style="left:182px;top:538px;width:1076px;height:1px;background:#dadcdd;"></div>
<div class="r" style="left:182px;top:559px;width:1076px;height:1px;background:#dadcdd;"></div>
<div class="r" style="left:182px;top:580px;width:1076px;height:1px;background:#dadcdd;"></div>
<div class="r" style="left:182px;top:601px;width:1076px;height:1px;background:#dadcdd;"></div>
<div class="r" style="left:182px;top:622px;width:1076px;height:1px;background:#dadcdd;"></div>
<div class="r" style="left:182px;top:643px;width:1076px;height:1px;background:#dadcdd;"></div>
<div class="r" style="left:182px;top:664px;width:1076px;height:1px;background:#dadcdd;"></div>
<div class="r" style="left:182px;top:685px;width:1076px;height:1px;background:#dadcdd;"></div>
<div class="r" style="left:182px;top:706px;width:1076px;height:1px;background:#dadcdd;"></div>
<div class="r" style="left:182px;top:727px;width:1076px;height:1px;background:#dadcdd;"></div>
<div class="r" style="left:182px;top:748px;width:1076px;height:1px;background:#dadcdd;"></div>
<div class="r" style="left:182px;top:769px;width:1076px;height:1px;background:#dadcdd;"></div>
<div class="r" style="left:182px;top:790px;width:1076px;height:1px;background:#dadcdd;"></div>
<div class="r" style="left:182px;top:811px;width:1076px;height:1px;background:#dadcdd;"></div>
<div class="r" style="left:182px;top:832px;width:1076px;height:1px;background:#dadcdd;"></div>
<div class="r" style="left:182px;top:853px;width:1076px;height:1px;background:#dadcdd;"></div>
<div class="r" style="left:182px;top:874px;width:1076px;height:1px;background:#dadcdd;"></div>
<div class="r" style="left:182px;top:890px;width:1076px;height:1px;background:#dadcdd;"></div>
<div class="r" style="left:182px;top:911px;width:1076px;height:1px;background:#dadcdd;"></div>
<div class="r" style="left:182px;top:927px;width:1076px;height:1px;background:#dadcdd;"></div>
<div class="r" style="left:182px;top:948px;width:1076px;height:1px;background:#dadcdd;"></div>
<div class="r" style="left:8px;top:338px;width:1250px;height:1px;background:#3c3c3c;"></div>
<div class="r" style="left:354px;top:391px;width:463px;height:21px;background:#ebf1de;"></div>
<div class="r" style="left:354px;top:412px;width:463px;height:21px;background:#fde9d9;"></div>
<div class="r" style="left:839px;top:391px;width:418px;height:42px;background:#eaeaea;"></div>
<div class="r" style="left:354px;top:517px;width:463px;height:21px;background:#fde9d9;"></div>
<div class="r" style="left:354px;top:538px;width:463px;height:21px;background:#ebf1de;"></div>
<div class="r" style="left:354px;top:559px;width:463px;height:21px;background:#ebf1de;"></div>
<div class="r" style="left:354px;top:580px;width:463px;height:21px;background:#ebf1de;"></div>
<div class="r" style="left:354px;top:601px;width:463px;height:21px;background:#fde9d9;"></div>
<div class="r" style="left:354px;top:622px;width:463px;height:21px;background:#ebf1de;"></div>
<div class="r" style="left:354px;top:643px;width:463px;height:21px;background:#ebf1de;"></div>
<div class="r" style="left:354px;top:664px;width:463px;height:21px;background:#ebf1de;"></div>
<div class="r" style="left:354px;top:685px;width:463px;height:21px;background:#ebf1de;"></div>
<div class="r" style="left:354px;top:706px;width:463px;height:21px;background:#fde9d9;"></div>
<div class="r" style="left:354px;top:727px;width:463px;height:21px;background:#ebf1de;"></div>
<div class="r" style="left:354px;top:748px;width:463px;height:21px;background:#fde9d9;"></div>
<div class="r" style="left:354px;top:769px;width:463px;height:21px;background:#ebf1de;"></div>
<div class="r" style="left:354px;top:790px;width:463px;height:21px;background:#ebf1de;"></div>
<div class="r" style="left:354px;top:811px;width:463px;height:21px;background:#ebf1de;"></div>
<div class="r" style="left:354px;top:832px;width:463px;height:21px;background:#ebf1de;"></div>
<div class="r" style="left:354px;top:853px;width:463px;height:21px;background:#ebf1de;"></div>
<div class="r" style="left:933px;top:517px;width:324px;height:357px;background:#eaeaea;"></div>
<div class="r" style="left:371px;top:247px;width:887px;height:40px;background:#f0f0f0;border:2px solid #b9b9b9;border-right:none;box-sizing:border-box;"></div>
<div class="r" style="left:376px;top:253px;width:408px;height:27px;background:#efefef;border-top:1px solid #ffffff;border-left:1px solid #ffffff;border-right:2px solid #6e6e6e;border-bottom:2px solid #5a5a5a;box-sizing:border-box;"></div>
<div class="t" style="left:381.50px;top:259.88px;font-size:14px;line-height:14px;color:#111;font-family:'Liberation Sans', sans-serif;transform:scaleX(1.0239);transform-origin:0 0;">Copiar transacciones diario general dentro libro mayor</div>
<div class="r" style="left:792px;top:256px;width:84px;height:24px;background:#efefef;border-top:1px solid #ffffff;border-left:1px solid #ffffff;border-right:2px solid #6e6e6e;border-bottom:2px solid #5a5a5a;box-sizing:border-box;"></div>
<div class="t" style="left:802.00px;top:261.30px;font-size:13.5px;line-height:13.5px;color:#111;font-family:'Liberation Sans', sans-serif;transform:scaleX(1.0886);transform-origin:0 0;">0,00  -&gt; 0</div>
<div class="r" style="left:883px;top:256px;width:86px;height:25px;background:#efefef;border-top:1px solid #ffffff;border-left:1px solid #ffffff;border-right:2px solid #6e6e6e;border-bottom:2px solid #5a5a5a;box-sizing:border-box;"></div>
<div class="t" style="left:894.50px;top:262.30px;font-size:13.5px;line-height:13.5px;color:#111;font-family:'Liberation Sans', sans-serif;transform:scaleX(1.0886);transform-origin:0 0;">0  -&gt; 0,00</div>
<div class="r" style="left:979px;top:256px;width:290px;height:25px;background:#efefef;border-top:1px solid #ffffff;border-left:1px solid #ffffff;border-right:2px solid #6e6e6e;border-bottom:2px solid #5a5a5a;box-sizing:border-box;"></div>
<div class="t" style="left:984.50px;top:261.38px;font-size:14px;line-height:14px;color:#111;font-family:'Liberation Sans', sans-serif;transform:scaleX(1.0240);transform-origin:0 0;">Eliminar todas las transacciones diario en el libro mayor</div>
<div class="t" style="left:184.50px;top:298.70px;font-size:10px;line-height:10px;color:#cacaca;font-family:'Liberation Sans', sans-serif;transform:scaleX(0.9651);transform-origin:0 0;">Class1</div>
<div class="t" style="left:220.50px;top:298.70px;font-size:10px;line-height:10px;color:#cacaca;font-family:'Liberation Sans', sans-serif;transform:scaleX(0.9651);transform-origin:0 0;">Class2</div>
<div class="t" style="left:256.50px;top:298.70px;font-size:10px;line-height:10px;color:#cacaca;font-family:'Liberation Sans', sans-serif;transform:scaleX(0.9651);transform-origin:0 0;">Class3</div>
<div class="t" style="left:292.50px;top:298.70px;font-size:10px;line-height:10px;color:#cacaca;font-family:'Liberation Sans', sans-serif;transform:scaleX(0.9651);transform-origin:0 0;">Class4</div>
<div class="t" style="left:357.50px;top:298.70px;font-size:10px;line-height:10px;color:#cacaca;font-family:'Liberation Sans', sans-serif;transform:scaleX(1.0638);transform-origin:0 0;">AccountNameByLocalLanguage</div>
<div class="t" style="left:842.00px;top:297.87px;font-size:11px;line-height:11px;color:#1a1a1a;font-family:'Liberation Sans', sans-serif;transform:scaleX(1.0941);transform-origin:0 0;">OpeningBalance</div>
<div class="t" style="left:994.57px;top:298.29px;font-size:10.5px;line-height:10.5px;color:#cacaca;font-family:'Liberation Sans', sans-serif;">Jan</div>
<div class="t" style="left:1074.41px;top:298.29px;font-size:10.5px;line-height:10.5px;color:#cacaca;font-family:'Liberation Sans', sans-serif;">Feb</div>
<div class="t" style="left:1155.42px;top:298.29px;font-size:10.5px;line-height:10.5px;color:#cacaca;font-family:'Liberation Sans', sans-serif;">Mar</div>
<div class="t" style="left:1238.16px;top:298.29px;font-size:10.5px;line-height:10.5px;color:#cacaca;font-family:'Liberation Sans', sans-serif;">Apr</div>
<div class="t" style="left:184.00px;top:321.21px;font-size:13px;line-height:13px;color:#111;font-family:'Liberation Sans', sans-serif;transform:scaleX(0.8896);transform-origin:0 0;">Clasa1</div>
<div class="t" style="left:251.00px;top:321.21px;font-size:13px;line-height:13px;color:#111;font-family:'Liberation Sans', sans-serif;transform:scaleX(0.9143);transform-origin:0 0;">Clasa3</div>
<div class="t" style="left:292.00px;top:321.21px;font-size:13px;line-height:13px;color:#111;font-family:'Liberation Sans', sans-serif;transform:scaleX(0.9143);transform-origin:0 0;">Clasa4</div>
<div class="t" style="left:358.50px;top:317.89px;font-size:17px;line-height:17px;color:#111;font-family:'Liberation Sans', sans-serif;">Nombre de la cuenta</div>
<div class="t" style="left:842.00px;top:323.29px;font-size:10.5px;line-height:10.5px;color:#111;font-family:'Liberation Sans', sans-serif;font-weight:bold;transform:scaleX(0.9675);transform-origin:0 0;">AperturaSaldo</div>
<div class="t" style="left:981.25px;top:317.89px;font-size:17px;line-height:17px;color:#111;font-family:'Liberation Sans', sans-serif;transform:scaleX(1.1000);transform-origin:100% 0;">Ene</div>
<div class="t" style="left:1063.21px;top:317.89px;font-size:17px;line-height:17px;color:#111;font-family:'Liberation Sans', sans-serif;transform:scaleX(1.1000);transform-origin:100% 0;">Feb</div>
<div class="t" style="left:1144.22px;top:317.89px;font-size:17px;line-height:17px;color:#111;font-family:'Liberation Sans', sans-serif;transform:scaleX(1.1000);transform-origin:100% 0;">Mar</div>
<div class="t" style="left:1228.04px;top:317.89px;font-size:17px;line-height:17px;color:#111;font-family:'Liberation Sans', sans-serif;transform:scaleX(1.1000);transform-origin:100% 0;">Abr</div>
<div class="t" style="left:358.00px;top:369.23px;font-size:19px;line-height:19px;color:#111;font-family:'Liberation Sans', sans-serif;font-weight:bold;transform:scaleX(0.8887);transform-origin:0 0;">BALANCE DECLARACIÓN</div>
<div class="t" style="left:358.00px;top:495.23px;font-size:19px;line-height:19px;color:#111;font-family:'Liberation Sans', sans-serif;font-weight:bold;transform:scaleX(0.9088);transform-origin:0 0;">CUENTA DE RESULTADOS</div>
<svg class="r" style="left:182px;top:392px" width="5" height="5" viewBox="0 0 5 5"><path d="M0 0 L5 0 L0 5 Z" fill="#1e8e2a"/></svg>
<div class="t" style="left:185.50px;top:392.72px;font-size:16px;line-height:16px;color:#111;font-family:'Liberation Sans', sans-serif;">1</div>
<svg class="r" style="left:182px;top:413px" width="5" height="5" viewBox="0 0 5 5"><path d="M0 0 L5 0 L0 5 Z" fill="#1e8e2a"/></svg>
<div class="t" style="left:185.50px;top:413.72px;font-size:16px;line-height:16px;color:#111;font-family:'Liberation Sans', sans-serif;">2</div>
<svg class="r" style="left:182px;top:518px" width="5" height="5" viewBox="0 0 5 5"><path d="M0 0 L5 0 L0 5 Z" fill="#1e8e2a"/></svg>
<div class="t" style="left:185.50px;top:518.72px;font-size:16px;line-height:16px;color:#111;font-family:'Liberation Sans', sans-serif;">3</div>
<svg class="r" style="left:182px;top:539px" width="5" height="5" viewBox="0 0 5 5"><path d="M0 0 L5 0 L0 5 Z" fill="#1e8e2a"/></svg>
<div class="t" style="left:185.50px;top:539.72px;font-size:16px;line-height:16px;color:#111;font-family:'Liberation Sans', sans-serif;">4</div>
<svg class="r" style="left:182px;top:560px" width="5" height="5" viewBox="0 0 5 5"><path d="M0 0 L5 0 L0 5 Z" fill="#1e8e2a"/></svg>
<div class="t" style="left:185.50px;top:560.72px;font-size:16px;line-height:16px;color:#111;font-family:'Liberation Sans', sans-serif;">4</div>
<svg class="r" style="left:182px;top:581px" width="5" height="5" viewBox="0 0 5 5"><path d="M0 0 L5 0 L0 5 Z" fill="#1e8e2a"/></svg>
<div class="t" style="left:185.50px;top:581.72px;font-size:16px;line-height:16px;color:#111;font-family:'Liberation Sans', sans-serif;">4</div>
<svg class="r" style="left:182px;top:602px" width="5" height="5" viewBox="0 0 5 5"><path d="M0 0 L5 0 L0 5 Z" fill="#1e8e2a"/></svg>
<div class="t" style="left:185.50px;top:602.72px;font-size:16px;line-height:16px;color:#111;font-family:'Liberation Sans', sans-serif;">5</div>
<svg class="r" style="left:182px;top:623px" width="5" height="5" viewBox="0 0 5 5"><path d="M0 0 L5 0 L0 5 Z" fill="#1e8e2a"/></svg>
<div class="t" style="left:185.50px;top:623.72px;font-size:16px;line-height:16px;color:#111;font-family:'Liberation Sans', sans-serif;">5</div>
<svg class="r" style="left:182px;top:644px" width="5" height="5" viewBox="0 0 5 5"><path d="M0 0 L5 0 L0 5 Z" fill="#1e8e2a"/></svg>
<div class="t" style="left:185.50px;top:644.72px;font-size:16px;line-height:16px;color:#111;font-family:'Liberation Sans', sans-serif;">6</div>
<svg class="r" style="left:182px;top:665px" width="5" height="5" viewBox="0 0 5 5"><path d="M0 0 L5 0 L0 5 Z" fill="#1e8e2a"/></svg>
<div class="t" style="left:185.50px;top:665.72px;font-size:16px;line-height:16px;color:#111;font-family:'Liberation Sans', sans-serif;">7</div>
<svg class="r" style="left:182px;top:686px" width="5" height="5" viewBox="0 0 5 5"><path d="M0 0 L5 0 L0 5 Z" fill="#1e8e2a"/></svg>
<div class="t" style="left:185.50px;top:686.72px;font-size:16px;line-height:16px;color:#111;font-family:'Liberation Sans', sans-serif;">8</div>
<svg class="r" style="left:182px;top:707px" width="5" height="5" viewBox="0 0 5 5"><path d="M0 0 L5 0 L0 5 Z" fill="#1e8e2a"/></svg>
<div class="t" style="left:185.50px;top:707.72px;font-size:16px;line-height:16px;color:#111;font-family:'Liberation Sans', sans-serif;">8</div>
<svg class="r" style="left:182px;top:728px" width="5" height="5" viewBox="0 0 5 5"><path d="M0 0 L5 0 L0 5 Z" fill="#1e8e2a"/></svg>
<div class="t" style="left:185.50px;top:728.72px;font-size:16px;line-height:16px;color:#111;font-family:'Liberation Sans', sans-serif;">8</div>
<svg class="r" style="left:182px;top:749px" width="5" height="5" viewBox="0 0 5 5"><path d="M0 0 L5 0 L0 5 Z" fill="#1e8e2a"/></svg>
<div class="t" style="left:185.50px;top:749.72px;font-size:16px;line-height:16px;color:#111;font-family:'Liberation Sans', sans-serif;">8</div>
<svg class="r" style="left:182px;top:770px" width="5" height="5" viewBox="0 0 5 5"><path d="M0 0 L5 0 L0 5 Z" fill="#1e8e2a"/></svg>
<div class="t" style="left:185.50px;top:770.72px;font-size:16px;line-height:16px;color:#111;font-family:'Liberation Sans', sans-serif;">8</div>
<svg class="r" style="left:182px;top:791px" width="5" height="5" viewBox="0 0 5 5"><path d="M0 0 L5 0 L0 5 Z" fill="#1e8e2a"/></svg>
<div class="t" style="left:185.50px;top:791.72px;font-size:16px;line-height:16px;color:#111;font-family:'Liberation Sans', sans-serif;">9</div>
<svg class="r" style="left:182px;top:812px" width="5" height="5" viewBox="0 0 5 5"><path d="M0 0 L5 0 L0 5 Z" fill="#1e8e2a"/></svg>
<div class="t" style="left:185.50px;top:812.72px;font-size:16px;line-height:16px;color:#111;font-family:'Liberation Sans', sans-serif;">9</div>
<svg class="r" style="left:182px;top:833px" width="5" height="5" viewBox="0 0 5 5"><path d="M0 0 L5 0 L0 5 Z" fill="#1e8e2a"/></svg>
<div class="t" style="left:185.50px;top:833.72px;font-size:16px;line-height:16px;color:#111;font-family:'Liberation Sans', sans-serif;">9</div>
<svg class="r" style="left:182px;top:854px" width="5" height="5" viewBox="0 0 5 5"><path d="M0 0 L5 0 L0 5 Z" fill="#1e8e2a"/></svg>
<div class="t" style="left:185.50px;top:854.72px;font-size:16px;line-height:16px;color:#111;font-family:'Liberation Sans', sans-serif;">9</div>
<div class="t" style="left:357.00px;top:395.87px;font-size:12.2px;line-height:12.2px;color:#111;font-family:'Liberation Sans', sans-serif;font-weight:bold;transform:scaleX(0.9246);transform-origin:0 0;">BIENES</div>
<div class="t" style="left:357.00px;top:416.87px;font-size:12.2px;line-height:12.2px;color:#111;font-family:'Liberation Sans', sans-serif;font-weight:bold;transform:scaleX(0.9719);transform-origin:0 0;">PATRIMONIO NETO Y PASIVO</div>
<div class="t" style="left:357.00px;top:521.79px;font-size:12.3px;line-height:12.3px;color:#111;font-family:'Liberation Sans', sans-serif;font-weight:bold;">Ventas e ingresos Operativos, directos</div>
<div class="t" style="left:357.00px;top:542.79px;font-size:12.3px;line-height:12.3px;color:#111;font-family:'Liberation Sans', sans-serif;font-weight:bold;transform:scaleX(0.9747);transform-origin:0 0;">Costes de Bienesy Servicios, directo</div>
<div class="t" style="left:357.00px;top:563.79px;font-size:12.3px;line-height:12.3px;color:#111;font-family:'Liberation Sans', sans-serif;font-weight:bold;transform:scaleX(0.9899);transform-origin:0 0;">Sueldos y salarios, directos, Administración</div>
<div class="t" style="left:357.00px;top:584.79px;font-size:12.3px;line-height:12.3px;color:#111;font-family:'Liberation Sans', sans-serif;font-weight:bold;transform:scaleX(0.9879);transform-origin:0 0;">Otros gastos directos</div>
<div class="t" style="left:357.00px;top:605.79px;font-size:12.3px;line-height:12.3px;color:#111;font-family:'Liberation Sans', sans-serif;font-weight:bold;">Ventas e ingresos, indirectos</div>
<div class="t" style="left:357.00px;top:626.79px;font-size:12.3px;line-height:12.3px;color:#111;font-family:'Liberation Sans', sans-serif;font-weight:bold;">Gastos operativos, indirectos</div>
<div class="t" style="left:357.00px;top:647.79px;font-size:12.3px;line-height:12.3px;color:#111;font-family:'Liberation Sans', sans-serif;font-weight:bold;">Gastos laborales, indirectos</div>
<div class="t" style="left:357.00px;top:668.79px;font-size:12.3px;line-height:12.3px;color:#111;font-family:'Liberation Sans', sans-serif;font-weight:bold;">Otros gastos operativos, indirectos</div>
<div class="t" style="left:357.00px;top:689.79px;font-size:12.3px;line-height:12.3px;color:#111;font-family:'Liberation Sans', sans-serif;font-weight:bold;">Depreciación y amortización</div>
<div class="t" style="left:357.00px;top:710.79px;font-size:12.3px;line-height:12.3px;color:#111;font-family:'Liberation Sans', sans-serif;font-weight:bold;transform:scaleX(0.9897);transform-origin:0 0;">Ganancia financiera</div>
<div class="t" style="left:357.00px;top:731.79px;font-size:12.3px;line-height:12.3px;color:#111;font-family:'Liberation Sans', sans-serif;font-weight:bold;transform:scaleX(0.9834);transform-origin:0 0;">Gastos financieros</div>
<div class="t" style="left:357.00px;top:752.79px;font-size:12.3px;line-height:12.3px;color:#111;font-family:'Liberation Sans', sans-serif;font-weight:bold;transform:scaleX(1.0155);transform-origin:0 0;">Ganancia Extraordinaria/No operacional</div>
<div class="t" style="left:357.00px;top:773.79px;font-size:12.3px;line-height:12.3px;color:#111;font-family:'Liberation Sans', sans-serif;font-weight:bold;transform:scaleX(1.0068);transform-origin:0 0;">Extraordinarios y otras pérdidas no operativas</div>
<div class="t" style="left:357.00px;top:794.79px;font-size:12.3px;line-height:12.3px;color:#111;font-family:'Liberation Sans', sans-serif;font-weight:bold;">Ingresos por impuestos ordinarios</div>
<div class="t" style="left:357.00px;top:815.79px;font-size:12.3px;line-height:12.3px;color:#111;font-family:'Liberation Sans', sans-serif;font-weight:bold;transform:scaleX(0.9919);transform-origin:0 0;">Partidas financiera impositiva</div>
<div class="t" style="left:357.00px;top:836.79px;font-size:12.3px;line-height:12.3px;color:#111;font-family:'Liberation Sans', sans-serif;font-weight:bold;transform:scaleX(1.0233);transform-origin:0 0;">Impuesto sobre resultado extraordinario</div>
<div class="t" style="left:357.00px;top:857.79px;font-size:12.3px;line-height:12.3px;color:#111;font-family:'Liberation Sans', sans-serif;font-weight:bold;">Beneficio neto o pérdidas/Transferencias y asignaciones</div>
<div class="t" style="left:405.00px;top:448.87px;font-size:11px;line-height:11px;color:#1a1ae0;font-family:'Liberation Sans', sans-serif;font-style:italic;transform:scaleX(1.0099);transform-origin:0 0;">Activos diferentes contra patrimonio y pasivos</div>
<div class="t" style="left:405.00px;top:895.04px;font-size:12px;line-height:12px;color:#00b050;font-family:'Liberation Sans', sans-serif;font-style:italic;transform:scaleX(1.0423);transform-origin:0 0;">Diferencia/beneficios no asignados</div>
<div class="t" style="left:906.28px;top:396.46px;font-size:12.7px;line-height:12.7px;color:#111;font-family:'Liberation Sans', sans-serif;font-weight:bold;">0,00</div>
<div class="t" style="left:951.96px;top:396.46px;font-size:12.7px;line-height:12.7px;color:#111;font-family:'Liberation Sans', sans-serif;font-weight:bold;">100000,00</div>
<div class="t" style="left:1032.96px;top:396.46px;font-size:12.7px;line-height:12.7px;color:#111;font-family:'Liberation Sans', sans-serif;font-weight:bold;">142800,00</div>
<div class="t" style="left:1113.96px;top:396.46px;font-size:12.7px;line-height:12.7px;color:#111;font-family:'Liberation Sans', sans-serif;font-weight:bold;">135950,00</div>
<div class="t" style="left:1197.80px;top:396.46px;font-size:12.7px;line-height:12.7px;color:#111;font-family:'Liberation Sans', sans-serif;font-weight:bold;">-73250,00</div>
<div class="t" style="left:906.28px;top:417.46px;font-size:12.7px;line-height:12.7px;color:#111;font-family:'Liberation Sans', sans-serif;font-weight:bold;">0,00</div>
<div class="t" style="left:947.74px;top:417.46px;font-size:12.7px;line-height:12.7px;color:#111;font-family:'Liberation Sans', sans-serif;font-weight:bold;">-100000,00</div>
<div class="t" style="left:1028.74px;top:417.46px;font-size:12.7px;line-height:12.7px;color:#111;font-family:'Liberation Sans', sans-serif;font-weight:bold;">-165800,00</div>
<div class="t" style="left:1109.74px;top:417.46px;font-size:12.7px;line-height:12.7px;color:#111;font-family:'Liberation Sans', sans-serif;font-weight:bold;">-106200,00</div>
<div class="t" style="left:1202.03px;top:417.46px;font-size:12.7px;line-height:12.7px;color:#111;font-family:'Liberation Sans', sans-serif;font-weight:bold;">72000,00</div>
<div class="t" style="left:904.78px;top:447.96px;font-size:12.7px;line-height:12.7px;color:#00b050;font-family:'Liberation Sans', sans-serif;font-style:italic;">0,00</div>
<div class="t" style="left:985.78px;top:447.96px;font-size:12.7px;line-height:12.7px;color:#00b050;font-family:'Liberation Sans', sans-serif;font-style:italic;">0,00</div>
<div class="t" style="left:1034.30px;top:447.96px;font-size:12.7px;line-height:12.7px;color:#00b050;font-family:'Liberation Sans', sans-serif;font-style:italic;">-23000,00</div>
<div class="t" style="left:1119.53px;top:447.96px;font-size:12.7px;line-height:12.7px;color:#00b050;font-family:'Liberation Sans', sans-serif;font-style:italic;">29750,00</div>
<div class="t" style="left:1203.36px;top:447.96px;font-size:12.7px;line-height:12.7px;color:#00b050;font-family:'Liberation Sans', sans-serif;font-style:italic;">-1250,00</div>
<div class="t" style="left:987.28px;top:522.46px;font-size:12.7px;line-height:12.7px;color:#111;font-family:'Liberation Sans', sans-serif;font-weight:bold;">0,00</div>
<div class="t" style="left:1035.80px;top:522.46px;font-size:12.7px;line-height:12.7px;color:#111;font-family:'Liberation Sans', sans-serif;font-weight:bold;">-29000,00</div>
<div class="t" style="left:1116.80px;top:522.46px;font-size:12.7px;line-height:12.7px;color:#111;font-family:'Liberation Sans', sans-serif;font-weight:bold;">-31000,00</div>
<div class="t" style="left:1230.28px;top:522.46px;font-size:12.7px;line-height:12.7px;color:#111;font-family:'Liberation Sans', sans-serif;font-weight:bold;">0,00</div>
<div class="t" style="left:987.28px;top:543.46px;font-size:12.7px;line-height:12.7px;color:#111;font-family:'Liberation Sans', sans-serif;font-weight:bold;">0,00</div>
<div class="t" style="left:1068.28px;top:543.46px;font-size:12.7px;line-height:12.7px;color:#111;font-family:'Liberation Sans', sans-serif;font-weight:bold;">0,00</div>
<div class="t" style="left:1149.28px;top:543.46px;font-size:12.7px;line-height:12.7px;color:#111;font-family:'Liberation Sans', sans-serif;font-weight:bold;">0,00</div>
<div class="t" style="left:1230.28px;top:543.46px;font-size:12.7px;line-height:12.7px;color:#111;font-family:'Liberation Sans', sans-serif;font-weight:bold;">0,00</div>
<div class="t" style="left:987.28px;top:564.46px;font-size:12.7px;line-height:12.7px;color:#111;font-family:'Liberation Sans', sans-serif;font-weight:bold;">0,00</div>
<div class="t" style="left:1068.28px;top:564.46px;font-size:12.7px;line-height:12.7px;color:#111;font-family:'Liberation Sans', sans-serif;font-weight:bold;">0,00</div>
<div class="t" style="left:1149.28px;top:564.46px;font-size:12.7px;line-height:12.7px;color:#111;font-family:'Liberation Sans', sans-serif;font-weight:bold;">0,00</div>
<div class="t" style="left:1230.28px;top:564.46px;font-size:12.7px;line-height:12.7px;color:#111;font-family:'Liberation Sans', sans-serif;font-weight:bold;">0,00</div>
<div class="t" style="left:987.28px;top:585.46px;font-size:12.7px;line-height:12.7px;color:#111;font-family:'Liberation Sans', sans-serif;font-weight:bold;">0,00</div>
<div class="t" style="left:1068.28px;top:585.46px;font-size:12.7px;line-height:12.7px;color:#111;font-family:'Liberation Sans', sans-serif;font-weight:bold;">0,00</div>
<div class="t" style="left:1149.28px;top:585.46px;font-size:12.7px;line-height:12.7px;color:#111;font-family:'Liberation Sans', sans-serif;font-weight:bold;">0,00</div>
<div class="t" style="left:1230.28px;top:585.46px;font-size:12.7px;line-height:12.7px;color:#111;font-family:'Liberation Sans', sans-serif;font-weight:bold;">0,00</div>
<div class="t" style="left:987.28px;top:606.46px;font-size:12.7px;line-height:12.7px;color:#111;font-family:'Liberation Sans', sans-serif;font-weight:bold;">0,00</div>
<div class="t" style="left:1068.28px;top:606.46px;font-size:12.7px;line-height:12.7px;color:#111;font-family:'Liberation Sans', sans-serif;font-weight:bold;">0,00</div>
<div class="t" style="left:1149.28px;top:606.46px;font-size:12.7px;line-height:12.7px;color:#111;font-family:'Liberation Sans', sans-serif;font-weight:bold;">0,00</div>
<div class="t" style="left:1230.28px;top:606.46px;font-size:12.7px;line-height:12.7px;color:#111;font-family:'Liberation Sans', sans-serif;font-weight:bold;">0,00</div>
<div class="t" style="left:987.28px;top:627.46px;font-size:12.7px;line-height:12.7px;color:#111;font-family:'Liberation Sans', sans-serif;font-weight:bold;">0,00</div>
<div class="t" style="left:1040.03px;top:627.46px;font-size:12.7px;line-height:12.7px;color:#111;font-family:'Liberation Sans', sans-serif;font-weight:bold;">50000,00</div>
<div class="t" style="left:1149.28px;top:627.46px;font-size:12.7px;line-height:12.7px;color:#111;font-family:'Liberation Sans', sans-serif;font-weight:bold;">0,00</div>
<div class="t" style="left:1230.28px;top:627.46px;font-size:12.7px;line-height:12.7px;color:#111;font-family:'Liberation Sans', sans-serif;font-weight:bold;">0,00</div>
<div class="t" style="left:987.28px;top:648.46px;font-size:12.7px;line-height:12.7px;color:#111;font-family:'Liberation Sans', sans-serif;font-weight:bold;">0,00</div>
<div class="t" style="left:1068.28px;top:648.46px;font-size:12.7px;line-height:12.7px;color:#111;font-family:'Liberation Sans', sans-serif;font-weight:bold;">0,00</div>
<div class="t" style="left:1149.28px;top:648.46px;font-size:12.7px;line-height:12.7px;color:#111;font-family:'Liberation Sans', sans-serif;font-weight:bold;">0,00</div>
<div class="t" style="left:1230.28px;top:648.46px;font-size:12.7px;line-height:12.7px;color:#111;font-family:'Liberation Sans', sans-serif;font-weight:bold;">0,00</div>
<div class="t" style="left:987.28px;top:669.46px;font-size:12.7px;line-height:12.7px;color:#111;font-family:'Liberation Sans', sans-serif;font-weight:bold;">0,00</div>
<div class="t" style="left:1047.09px;top:669.46px;font-size:12.7px;line-height:12.7px;color:#111;font-family:'Liberation Sans', sans-serif;font-weight:bold;">2000,00</div>
<div class="t" style="left:1149.28px;top:669.46px;font-size:12.7px;line-height:12.7px;color:#111;font-family:'Liberation Sans', sans-serif;font-weight:bold;">0,00</div>
<div class="t" style="left:1230.28px;top:669.46px;font-size:12.7px;line-height:12.7px;color:#111;font-family:'Liberation Sans', sans-serif;font-weight:bold;">0,00</div>
<div class="t" style="left:987.28px;top:690.46px;font-size:12.7px;line-height:12.7px;color:#111;font-family:'Liberation Sans', sans-serif;font-weight:bold;">0,00</div>
<div class="t" style="left:1068.28px;top:690.46px;font-size:12.7px;line-height:12.7px;color:#111;font-family:'Liberation Sans', sans-serif;font-weight:bold;">0,00</div>
<div class="t" style="left:1149.28px;top:690.46px;font-size:12.7px;line-height:12.7px;color:#111;font-family:'Liberation Sans', sans-serif;font-weight:bold;">0,00</div>
<div class="t" style="left:1230.28px;top:690.46px;font-size:12.7px;line-height:12.7px;color:#111;font-family:'Liberation Sans', sans-serif;font-weight:bold;">0,00</div>
<div class="t" style="left:987.28px;top:711.46px;font-size:12.7px;line-height:12.7px;color:#111;font-family:'Liberation Sans', sans-serif;font-weight:bold;">0,00</div>
<div class="t" style="left:1068.28px;top:711.46px;font-size:12.7px;line-height:12.7px;color:#111;font-family:'Liberation Sans', sans-serif;font-weight:bold;">0,00</div>
<div class="t" style="left:1149.28px;top:711.46px;font-size:12.7px;line-height:12.7px;color:#111;font-family:'Liberation Sans', sans-serif;font-weight:bold;">0,00</div>
<div class="t" style="left:1230.28px;top:711.46px;font-size:12.7px;line-height:12.7px;color:#111;font-family:'Liberation Sans', sans-serif;font-weight:bold;">0,00</div>
<div class="t" style="left:987.28px;top:732.46px;font-size:12.7px;line-height:12.7px;color:#111;font-family:'Liberation Sans', sans-serif;font-weight:bold;">0,00</div>
<div class="t" style="left:1068.28px;top:732.46px;font-size:12.7px;line-height:12.7px;color:#111;font-family:'Liberation Sans', sans-serif;font-weight:bold;">0,00</div>
<div class="t" style="left:1128.09px;top:732.46px;font-size:12.7px;line-height:12.7px;color:#111;font-family:'Liberation Sans', sans-serif;font-weight:bold;">1250,00</div>
<div class="t" style="left:1209.09px;top:732.46px;font-size:12.7px;line-height:12.7px;color:#111;font-family:'Liberation Sans', sans-serif;font-weight:bold;">1250,00</div>
<div class="t" style="left:987.28px;top:753.46px;font-size:12.7px;line-height:12.7px;color:#111;font-family:'Liberation Sans', sans-serif;font-weight:bold;">0,00</div>
<div class="t" style="left:1068.28px;top:753.46px;font-size:12.7px;line-height:12.7px;color:#111;font-family:'Liberation Sans', sans-serif;font-weight:bold;">0,00</div>
<div class="t" style="left:1149.28px;top:753.46px;font-size:12.7px;line-height:12.7px;color:#111;font-family:'Liberation Sans', sans-serif;font-weight:bold;">0,00</div>
<div class="t" style="left:1230.28px;top:753.46px;font-size:12.7px;line-height:12.7px;color:#111;font-family:'Liberation Sans', sans-serif;font-weight:bold;">0,00</div>
<div class="t" style="left:987.28px;top:774.46px;font-size:12.7px;line-height:12.7px;color:#111;font-family:'Liberation Sans', sans-serif;font-weight:bold;">0,00</div>
<div class="t" style="left:1068.28px;top:774.46px;font-size:12.7px;line-height:12.7px;color:#111;font-family:'Liberation Sans', sans-serif;font-weight:bold;">0,00</div>
<div class="t" style="left:1149.28px;top:774.46px;font-size:12.7px;line-height:12.7px;color:#111;font-family:'Liberation Sans', sans-serif;font-weight:bold;">0,00</div>
<div class="t" style="left:1230.28px;top:774.46px;font-size:12.7px;line-height:12.7px;color:#111;font-family:'Liberation Sans', sans-serif;font-weight:bold;">0,00</div>
<div class="t" style="left:987.28px;top:795.46px;font-size:12.7px;line-height:12.7px;color:#111;font-family:'Liberation Sans', sans-serif;font-weight:bold;">0,00</div>
<div class="t" style="left:1068.28px;top:795.46px;font-size:12.7px;line-height:12.7px;color:#111;font-family:'Liberation Sans', sans-serif;font-weight:bold;">0,00</div>
<div class="t" style="left:1149.28px;top:795.46px;font-size:12.7px;line-height:12.7px;color:#111;font-family:'Liberation Sans', sans-serif;font-weight:bold;">0,00</div>
<div class="t" style="left:1230.28px;top:795.46px;font-size:12.7px;line-height:12.7px;color:#111;font-family:'Liberation Sans', sans-serif;font-weight:bold;">0,00</div>
<div class="t" style="left:987.28px;top:816.46px;font-size:12.7px;line-height:12.7px;color:#111;font-family:'Liberation Sans', sans-serif;font-weight:bold;">0,00</div>
<div class="t" style="left:1068.28px;top:816.46px;font-size:12.7px;line-height:12.7px;color:#111;font-family:'Liberation Sans', sans-serif;font-weight:bold;">0,00</div>
<div class="t" style="left:1149.28px;top:816.46px;font-size:12.7px;line-height:12.7px;color:#111;font-family:'Liberation Sans', sans-serif;font-weight:bold;">0,00</div>
<div class="t" style="left:1230.28px;top:816.46px;font-size:12.7px;line-height:12.7px;color:#111;font-family:'Liberation Sans', sans-serif;font-weight:bold;">0,00</div>
<div class="t" style="left:987.28px;top:837.46px;font-size:12.7px;line-height:12.7px;color:#111;font-family:'Liberation Sans', sans-serif;font-weight:bold;">0,00</div>
<div class="t" style="left:1068.28px;top:837.46px;font-size:12.7px;line-height:12.7px;color:#111;font-family:'Liberation Sans', sans-serif;font-weight:bold;">0,00</div>
<div class="t" style="left:1149.28px;top:837.46px;font-size:12.7px;line-height:12.7px;color:#111;font-family:'Liberation Sans', sans-serif;font-weight:bold;">0,00</div>
<div class="t" style="left:1230.28px;top:837.46px;font-size:12.7px;line-height:12.7px;color:#111;font-family:'Liberation Sans', sans-serif;font-weight:bold;">0,00</div>
<div class="t" style="left:987.28px;top:858.46px;font-size:12.7px;line-height:12.7px;color:#111;font-family:'Liberation Sans', sans-serif;font-weight:bold;">0,00</div>
<div class="t" style="left:1068.28px;top:858.46px;font-size:12.7px;line-height:12.7px;color:#111;font-family:'Liberation Sans', sans-serif;font-weight:bold;">0,00</div>
<div class="t" style="left:1149.28px;top:858.46px;font-size:12.7px;line-height:12.7px;color:#111;font-family:'Liberation Sans', sans-serif;font-weight:bold;">0,00</div>
<div class="t" style="left:1230.28px;top:858.46px;font-size:12.7px;line-height:12.7px;color:#111;font-family:'Liberation Sans', sans-serif;font-weight:bold;">0,00</div>
<div class="t" style="left:985.78px;top:894.96px;font-size:12.7px;line-height:12.7px;color:#00b050;font-family:'Liberation Sans', sans-serif;font-style:italic;">0,00</div>
<div class="t" style="left:1038.53px;top:894.96px;font-size:12.7px;line-height:12.7px;color:#00b050;font-family:'Liberation Sans', sans-serif;font-style:italic;">23000,00</div>
<div class="t" style="left:1115.30px;top:894.96px;font-size:12.7px;line-height:12.7px;color:#00b050;font-family:'Liberation Sans', sans-serif;font-style:italic;">-29750,00</div>
<div class="t" style="left:1207.59px;top:894.96px;font-size:12.7px;line-height:12.7px;color:#00b050;font-family:'Liberation Sans', sans-serif;font-style:italic;">1250,00</div>
<div class="r" style="left:182px;top:245px;width:1px;height:46px;background:#111;"></div>
<div class="r" style="left:182px;top:245px;width:36px;height:1px;background:#111;"></div>
<div class="r" style="left:216px;top:245px;width:3px;height:42px;background:#111;"></div>
<div class="r" style="left:182px;top:289px;width:32px;height:3px;background:#111;"></div>
<div class="r" style="left:213px;top:286px;width:8px;height:8px;background:#ffffff;"></div>
<div class="r" style="left:214px;top:288px;width:6px;height:5px;background:#111;"></div>
<div class="r" style="left:216px;top:245px;width:3px;height:41px;background:#111;"></div>
<div class="r" style="left:181px;top:244px;width:1px;height:47px;background:#e1a93a;"></div>
<svg class="r" style="left:10px;top:394px" width="16" height="16" viewBox="0 0 16 16"><rect x="0.75" y="0.75" width="14.5" height="14.5" fill="#e6e9f0" stroke="#8a8e95" stroke-width="1.5"/><path d="M4 9h8M8 5v8" stroke="#000" stroke-width="2.6"/></svg>
<svg class="r" style="left:10px;top:415px" width="16" height="16" viewBox="0 0 16 16"><rect x="0.75" y="0.75" width="14.5" height="14.5" fill="#e6e9f0" stroke="#8a8e95" stroke-width="1.5"/><path d="M4 9h8M8 5v8" stroke="#000" stroke-width="2.6"/></svg>
<svg class="r" style="left:10px;top:520px" width="16" height="16" viewBox="0 0 16 16"><rect x="0.75" y="0.75" width="14.5" height="14.5" fill="#e6e9f0" stroke="#8a8e95" stroke-width="1.5"/><path d="M4 9h8M8 5v8" stroke="#000" stroke-width="2.6"/></svg>
<svg class="r" style="left:10px;top:541px" width="16" height="16" viewBox="0 0 16 16"><rect x="0.75" y="0.75" width="14.5" height="14.5" fill="#e6e9f0" stroke="#8a8e95" stroke-width="1.5"/><path d="M4 9h8M8 5v8" stroke="#000" stroke-width="2.6"/></svg>
<svg class="r" style="left:10px;top:562px" width="16" height="16" viewBox="0 0 16 16"><rect x="0.75" y="0.75" width="14.5" height="14.5" fill="#e6e9f0" stroke="#8a8e95" stroke-width="1.5"/><path d="M4 9h8M8 5v8" stroke="#000" stroke-width="2.6"/></svg>
<svg class="r" style="left:10px;top:583px" width="16" height="16" viewBox="0 0 16 16"><rect x="0.75" y="0.75" width="14.5" height="14.5" fill="#e6e9f0" stroke="#8a8e95" stroke-width="1.5"/><path d="M4 9h8M8 5v8" stroke="#000" stroke-width="2.6"/></svg>
<svg class="r" style="left:10px;top:604px" width="16" height="16" viewBox="0 0 16 16"><rect x="0.75" y="0.75" width="14.5" height="14.5" fill="#e6e9f0" stroke="#8a8e95" stroke-width="1.5"/><path d="M4 9h8M8 5v8" stroke="#000" stroke-width="2.6"/></svg>
<svg class="r" style="left:10px;top:625px" width="16" height="16" viewBox="0 0 16 16"><rect x="0.75" y="0.75" width="14.5" height="14.5" fill="#e6e9f0" stroke="#8a8e95" stroke-width="1.5"/><path d="M4 9h8M8 5v8" stroke="#000" stroke-width="2.6"/></svg>
<svg class="r" style="left:10px;top:646px" width="16" height="16" viewBox="0 0 16 16"><rect x="0.75" y="0.75" width="14.5" height="14.5" fill="#e6e9f0" stroke="#8a8e95" stroke-width="1.5"/><path d="M4 9h8M8 5v8" stroke="#000" stroke-width="2.6"/></svg>
<svg class="r" style="left:10px;top:667px" width="16" height="16" viewBox="0 0 16 16"><rect x="0.75" y="0.75" width="14.5" height="14.5" fill="#e6e9f0" stroke="#8a8e95" stroke-width="1.5"/><path d="M4 9h8M8 5v8" stroke="#000" stroke-width="2.6"/></svg>
<svg class="r" style="left:10px;top:688px" width="16" height="16" viewBox="0 0 16 16"><rect x="0.75" y="0.75" width="14.5" height="14.5" fill="#e6e9f0" stroke="#8a8e95" stroke-width="1.5"/><path d="M4 9h8M8 5v8" stroke="#000" stroke-width="2.6"/></svg>
<svg class="r" style="left:10px;top:709px" width="16" height="16" viewBox="0 0 16 16"><rect x="0.75" y="0.75" width="14.5" height="14.5" fill="#e6e9f0" stroke="#8a8e95" stroke-width="1.5"/><path d="M4 9h8M8 5v8" stroke="#000" stroke-width="2.6"/></svg>
<svg class="r" style="left:10px;top:730px" width="16" height="16" viewBox="0 0 16 16"><rect x="0.75" y="0.75" width="14.5" height="14.5" fill="#e6e9f0" stroke="#8a8e95" stroke-width="1.5"/><path d="M4 9h8M8 5v8" stroke="#000" stroke-width="2.6"/></svg>
<svg class="r" style="left:10px;top:751px" width="16" height="16" viewBox="0 0 16 16"><rect x="0.75" y="0.75" width="14.5" height="14.5" fill="#e6e9f0" stroke="#8a8e95" stroke-width="1.5"/><path d="M4 9h8M8 5v8" stroke="#000" stroke-width="2.6"/></svg>
<svg class="r" style="left:10px;top:772px" width="16" height="16" viewBox="0 0 16 16"><rect x="0.75" y="0.75" width="14.5" height="14.5" fill="#e6e9f0" stroke="#8a8e95" stroke-width="1.5"/><path d="M4 9h8M8 5v8" stroke="#000" stroke-width="2.6"/></svg>
<svg class="r" style="left:10px;top:793px" width="16" height="16" viewBox="0 0 16 16"><rect x="0.75" y="0.75" width="14.5" height="14.5" fill="#e6e9f0" stroke="#8a8e95" stroke-width="1.5"/><path d="M4 9h8M8 5v8" stroke="#000" stroke-width="2.6"/></svg>
<svg class="r" style="left:10px;top:814px" width="16" height="16" viewBox="0 0 16 16"><rect x="0.75" y="0.75" width="14.5" height="14.5" fill="#e6e9f0" stroke="#8a8e95" stroke-width="1.5"/><path d="M4 9h8M8 5v8" stroke="#000" stroke-width="2.6"/></svg>
<svg class="r" style="left:10px;top:835px" width="16" height="16" viewBox="0 0 16 16"><rect x="0.75" y="0.75" width="14.5" height="14.5" fill="#e6e9f0" stroke="#8a8e95" stroke-width="1.5"/><path d="M4 9h8M8 5v8" stroke="#000" stroke-width="2.6"/></svg>
<svg class="r" style="left:10px;top:856px" width="16" height="16" viewBox="0 0 16 16"><rect x="0.75" y="0.75" width="14.5" height="14.5" fill="#e6e9f0" stroke="#8a8e95" stroke-width="1.5"/><path d="M4 9h8M8 5v8" stroke="#000" stroke-width="2.6"/></svg>
<div class="r" style="left:841px;top:174px;width:417px;height:2px;background:#111;"></div>
<div class="r" style="left:841px;top:174px;width:2px;height:6px;background:#111;"></div>
<div class="r" style="left:886px;top:190px;width:2px;height:2px;background:#111;"></div>
<div class="r" style="left:935px;top:190px;width:323px;height:2px;background:#111;"></div>
<div class="r" style="left:935px;top:190px;width:2px;height:6px;background:#111;"></div>
<div class="r" style="left:973px;top:206px;width:2px;height:2px;background:#111;"></div>
<div class="r" style="left:1054px;top:206px;width:2px;height:2px;background:#111;"></div>
<div class="r" style="left:1135px;top:206px;width:2px;height:2px;background:#111;"></div>
<div class="r" style="left:1216px;top:206px;width:2px;height:2px;background:#111;"></div>
</body></html>
